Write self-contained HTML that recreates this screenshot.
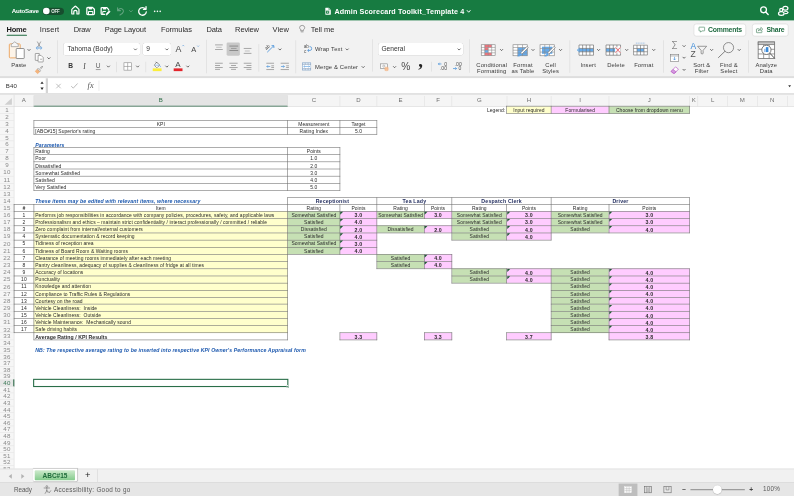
<!DOCTYPE html>
<html lang="en"><head><meta charset="utf-8"><title>Admin Scorecard Toolkit_Template 4</title>
<style>
html,body{margin:0;padding:0;background:#fff;}
body{width:794px;height:496px;overflow:hidden;position:relative;font-family:"Liberation Sans",sans-serif;}
#root{position:absolute;left:0;top:0;width:1440px;height:900px;transform-origin:0 0;transform:scale(0.551389);overflow:hidden;background:#fff;}
.a{position:absolute;box-sizing:border-box;}
.t{position:absolute;transform:translateY(-50%);white-space:nowrap;line-height:1;}
.c{position:absolute;transform:translate(-50%,-50%);white-space:nowrap;line-height:1;}
.cell{position:absolute;box-sizing:border-box;white-space:nowrap;overflow:hidden;font-size:9px;line-height:1;display:flex;align-items:center;color:#2b2b2b;letter-spacing:0.1px;}
svg{display:block}
#wrap{position:absolute;left:0;top:0;width:794px;height:496px;overflow:hidden;will-change:transform;}
</style></head><body><div id="wrap"><div id="root">
<div class="a" style="left:0.0px;top:0.0px;width:1440.0px;height:37.63px;background:#177b41;"></div>
<div class="a" style="left:0.0px;top:36.63px;width:1440.0px;height:101.2px;background:#f2f2f2;"></div>
<div class="a" style="left:0.0px;top:137.83px;width:1440.0px;height:4.53px;background:#dedede;"></div>
<div class="a" style="left:0.0px;top:142.37px;width:1440.0px;height:26.3px;background:#fff;"></div>
<div class="a" style="left:83.43px;top:142.37px;width:3.26px;height:26.3px;background:#d4d4d4;"></div>
<div class="a" style="left:0.0px;top:168.66px;width:1440.0px;height:3.63px;background:#dcdcdc;"></div>
<span class="t" id="t1" style="left:21.4px;top:20.68px;font-size:11.2px;letter-spacing:-0.351px;color:#fff;font-weight:bold;">AutoSave</span>
<div class="a" style="left:76.9px;top:13.78px;width:39.54px;height:13.24px;background:#174d2e;border-radius:99px;"></div>
<div class="a" style="left:77.8px;top:14.33px;width:12.33px;height:12.15px;background:#fff;border-radius:50%;"></div>
<span class="t" id="t2" style="left:92.86px;top:20.68px;font-size:8px;letter-spacing:-0.385px;color:#e8f0ea;font-weight:bold;">OFF</span>
<svg class="a" style="left:128.4px;top:9.43px;width:17.41px;height:18.14px;overflow:visible;" viewBox="0 0 18 19"><path d="M2.2 9.2 Q2.2 8.2 3 7.5 L8 2.8 Q9 2 10 2.8 L15 7.5 Q15.8 8.2 15.8 9.2 V16 Q15.8 17.2 14.6 17.2 H12 V12.4 Q12 10.4 9 10.4 Q6 10.4 6 12.4 V17.2 H3.4 Q2.2 17.2 2.2 16 Z" fill="none" stroke="#fff" stroke-width="2.3" stroke-linejoin="round"/></svg>
<svg class="a" style="left:155.97px;top:11.61px;width:16.69px;height:15.96px;overflow:visible;" viewBox="0 0 18 17"><path d="M1.6 3.6 Q1.6 1.6 3.6 1.6 H12.6 L16.4 5.2 V13.4 Q16.4 15.4 14.4 15.4 H3.6 Q1.6 15.4 1.6 13.4 Z" fill="none" stroke="#fff" stroke-width="2.5" stroke-linejoin="round"/><rect x="5.4" y="1.8" width="6.2" height="3.6" fill="#fff"/><rect x="4.8" y="9.4" width="8.4" height="5.8" rx="0.8" fill="none" stroke="#fff" stroke-width="2"/></svg>
<svg class="a" style="left:182.45px;top:11.61px;width:18.14px;height:16.32px;overflow:visible;" viewBox="0 0 20 17.4"><path d="M16.4 7.6 V5.2 L12.6 1.6 H3.6 Q1.6 1.6 1.6 3.6 V13.4 Q1.6 15.4 3.6 15.4 H9.4" fill="none" stroke="#fff" stroke-width="2.5" stroke-linejoin="round"/><rect x="5.4" y="1.8" width="6.2" height="3.6" fill="#fff"/><path d="M4.8 15 V9.4 H11" fill="none" stroke="#fff" stroke-width="2"/><path d="M11.4 16.8 L12 13.6 L17 8.6 Q18 7.8 19 8.8 Q19.8 9.8 19 10.6 L14.2 15.6 Z" fill="#fff" stroke="#fff" stroke-width="1.2" stroke-linejoin="round"/></svg>
<svg class="a" style="left:210.74px;top:11.61px;width:15.6px;height:16.32px;overflow:visible;" viewBox="0 0 18 18.8"><path d="M2.6 2.4 V8.4 H8.6 M3 8 Q6.6 2.8 11.4 4.4 Q15.6 6.2 14.8 10.6 Q13.8 14.4 7.6 17.4" fill="none" stroke="#63a480" stroke-width="2.2" stroke-linecap="round" stroke-linejoin="round"/></svg>
<svg class="a" style="left:233.59px;top:17.77px;width:6.89px;height:5.08px;overflow:visible;" viewBox="0 0 8 6"><path d="M1 1.2 L4 4.4 L7 1.2" fill="none" stroke="#63a480" stroke-width="1.8" stroke-linecap="round"/></svg>
<svg class="a" style="left:248.83px;top:10.52px;width:18.86px;height:18.14px;overflow:visible;" viewBox="0 0 20 19.2"><path d="M15.8 5.6 A7.4 7.4 0 1 0 17.4 11" fill="none" stroke="#fff" stroke-width="2.5" stroke-linecap="round"/><path d="M16.8 1.2 V6.2 H11.8" fill="none" stroke="#fff" stroke-width="2.5" stroke-linecap="round" stroke-linejoin="round"/></svg>
<div class="a" style="left:278.57px;top:19.04px;width:3.26px;height:3.26px;background:#fff;border-radius:50%;"></div>
<div class="a" style="left:283.83px;top:19.04px;width:3.26px;height:3.26px;background:#fff;border-radius:50%;"></div>
<div class="a" style="left:289.09px;top:19.04px;width:3.26px;height:3.26px;background:#fff;border-radius:50%;"></div>
<svg class="a" style="left:588.7px;top:13.06px;width:11.97px;height:14.51px;overflow:visible;" viewBox="0 0 13 16"><path d="M1 1.8 Q1 1 1.8 1 H8 L12 5 V14.2 Q12 15 11.2 15 H1.8 Q1 15 1 14.2 Z" fill="#fff"/><path d="M8 1 V5 H12" fill="none" stroke="#177b41" stroke-width="1"/><rect x="2.2" y="7" width="6.6" height="6" fill="#177b41"/><path d="M3.6 8.2 L7.4 11.8 M7.4 8.2 L3.6 11.8" stroke="#fff" stroke-width="1.1"/></svg>
<span class="t" id="t3" style="left:606.47px;top:20.68px;font-size:13px;letter-spacing:0.252px;color:#fff;font-weight:bold;">Admin Scorecard Toolkit_Template 4</span>
<svg class="a" style="left:845.86px;top:17.77px;width:7.98px;height:5.44px;overflow:visible;" viewBox="0 0 8 6"><path d="M1 1.2 L4 4.6 L7 1.2" fill="none" stroke="#fff" stroke-width="2" stroke-linecap="round"/></svg>
<svg class="a" style="left:1374.71px;top:7.25px;width:21.76px;height:23.58px;overflow:visible;" viewBox="758 4 12 13"><circle cx="763.4" cy="10" r="2.9" fill="none" stroke="#fff" stroke-width="1.3"/><path d="M765.6 12.2 L768 14.6" stroke="#fff" stroke-width="1.4" stroke-linecap="round"/></svg>
<svg class="a" style="left:1409.17px;top:7.25px;width:25.39px;height:25.39px;overflow:visible;" viewBox="777 4 14 14"><ellipse cx="785.5" cy="8.3" rx="2.5" ry="1.9" fill="none" stroke="#fff" stroke-width="1.25"/><circle cx="781.3" cy="10.1" r="1.5" fill="none" stroke="#fff" stroke-width="1.2"/><ellipse cx="781.4" cy="13.7" rx="2.8" ry="1.9" fill="none" stroke="#fff" stroke-width="1.25"/><path d="M784.6 11.4 Q787.6 11 788.2 12.6 Q787.6 13.8 785.2 13.8" fill="none" stroke="#fff" stroke-width="1.1" stroke-linecap="round"/></svg>
<span class="t" id="t4" style="left:11.79px;top:52.59px;font-size:13.6px;letter-spacing:-0.384px;color:#1c1c1c;font-weight:bold;">Home</span>
<div class="a" style="left:11.61px;top:62.57px;width:37.0px;height:2.72px;background:#1e6b3f;border-radius:2px;"></div>
<span class="t" id="t5" style="left:72.18px;top:52.59px;font-size:13.6px;letter-spacing:0.236px;color:#2c2c2c;">Insert</span>
<span class="t" id="t6" style="left:133.66px;top:52.59px;font-size:13.6px;letter-spacing:-0.301px;color:#2c2c2c;">Draw</span>
<span class="t" id="t7" style="left:190.07px;top:52.59px;font-size:13.6px;letter-spacing:-0.162px;color:#2c2c2c;">Page Layout</span>
<span class="t" id="t8" style="left:291.81px;top:52.59px;font-size:13.6px;letter-spacing:-0.037px;color:#2c2c2c;">Formulas</span>
<span class="t" id="t9" style="left:374.69px;top:52.59px;font-size:13.6px;letter-spacing:-0.323px;color:#2c2c2c;">Data</span>
<span class="t" id="t10" style="left:426.38px;top:52.59px;font-size:13.6px;letter-spacing:-0.246px;color:#2c2c2c;">Review</span>
<span class="t" id="t11" style="left:494.21px;top:52.59px;font-size:13.6px;letter-spacing:0.174px;color:#2c2c2c;">View</span>
<span class="t" id="t12" style="left:563.67px;top:52.59px;font-size:13.6px;letter-spacing:-0.044px;color:#2c2c2c;">Tell me</span>
<svg class="a" style="left:542.27px;top:44.98px;width:11.97px;height:14.51px;overflow:visible;" viewBox="0 0 12 15"><path d="M3.6 9.4 Q1.2 7.6 1.2 5.2 Q1.4 1.2 6 1 Q10.6 1.2 10.8 5.2 Q10.8 7.6 8.4 9.4 V11 H3.6 Z M4.2 13.2 H7.8" fill="none" stroke="#666" stroke-width="1.1" stroke-linejoin="round" stroke-linecap="round"/></svg>
<div class="a" style="left:1258.28px;top:43.35px;width:94.49px;height:22.31px;background:#fff;border-radius:4.5px;border:1px solid #d4d4d4;"></div>
<svg class="a" style="left:1266.62px;top:48.24px;width:11.61px;height:11.61px;overflow:visible;" viewBox="0 0 13 13"><path d="M1.6 1.4 H11.4 Q12.2 1.4 12.2 2.2 V8.2 Q12.2 9 11.4 9 H6.6 L4 11.6 V9 H1.6 Q0.8 9 0.8 8.2 V2.2 Q0.8 1.4 1.6 1.4 Z" fill="none" stroke="#3c7d57" stroke-width="1.2" stroke-linejoin="round"/></svg>
<span class="t" id="t13" style="left:1283.85px;top:55.13px;font-size:12.5px;letter-spacing:-0.341px;color:#1f6a40;font-weight:bold;">Comments</span>
<div class="a" style="left:1364.19px;top:43.35px;width:65.65px;height:22.31px;background:#fff;border-radius:4.5px;border:1px solid #d4d4d4;"></div>
<svg class="a" style="left:1371.45px;top:47.88px;width:13.06px;height:12.33px;overflow:visible;" viewBox="0 0 14 13"><path d="M5 4.4 H2.2 Q1 4.4 1 5.6 V11 Q1 12 2.2 12 H10.6 Q11.6 12 11.6 11 V9" fill="none" stroke="#3c7d57" stroke-width="1.2" stroke-linecap="round"/><path d="M4.6 9 Q5 4.6 9.6 4.2 V1.6 L13.4 5 L9.6 8.4 V6 Q6.4 6 4.6 9 Z" fill="none" stroke="#3c7d57" stroke-width="1.1" stroke-linejoin="round"/></svg>
<span class="t" id="t14" style="left:1389.94px;top:55.13px;font-size:12.5px;letter-spacing:-0.390px;color:#1f6a40;font-weight:bold;">Share</span>
<svg class="a" style="left:16.32px;top:75.45px;width:28.65px;height:31.92px;overflow:visible;" viewBox="0 0 28.7 31.9"><rect x="0.9" y="4.6" width="19.8" height="25.4" rx="1.6" fill="#fdf4e8" stroke="#eca55f" stroke-width="1.7"/><path d="M4.4 9.6 V5.6 L10.8 0.8 L17.2 5.6 V9.6 Z" fill="#f7f7f7" stroke="#8d8d8d" stroke-width="1.2" stroke-linejoin="round"/><rect x="13.4" y="13" width="14.6" height="18.2" rx="1.2" fill="#fff" stroke="#747474" stroke-width="1.4"/></svg>
<svg class="a" style="left:49.78px;top:89.32px;width:5.26px;height:3.45px;overflow:visible;" viewBox="0 0 8 4.4"><path d="M0.8 0.6 L4 3.8 L7.2 0.6" fill="none" stroke="#2c2c2c" stroke-width="1.9" stroke-linecap="round" stroke-linejoin="round"/></svg>
<span class="t" id="t15" style="left:20.49px;top:117.34px;font-size:10.6px;letter-spacing:-0.018px;color:#3a3a3a;">Paste</span>
<svg class="a" style="left:65.29px;top:75.45px;width:11.61px;height:15.23px;overflow:visible;" viewBox="0 0 12 16"><path d="M3 1 L8.2 10.4 M9 1 L3.8 10.4" stroke="#666" stroke-width="1.1" stroke-linecap="round"/><circle cx="2.8" cy="12.6" r="2" fill="none" stroke="#3a8ad8" stroke-width="1.2"/><circle cx="9.2" cy="12.6" r="2" fill="none" stroke="#3a8ad8" stroke-width="1.2"/></svg>
<svg class="a" style="left:62.75px;top:96.12px;width:16.32px;height:17.41px;overflow:visible;" viewBox="0 0 17 18"><path d="M6.4 14 H1.6 Q1 14 1 13.4 V1.6 Q1 1 1.6 1 H8.6 V4" fill="#fafafa" stroke="#6c6c6c" stroke-width="1.1"/><path d="M6.4 4.6 H12 L16 8.6 V16.4 Q16 17 15.4 17 H7 Q6.4 17 6.4 16.4 Z" fill="#fff" stroke="#6c6c6c" stroke-width="1.1"/><path d="M10.4 12 h3 M11.9 10.5 v3" stroke="#8a8a8a" stroke-width="0.9"/></svg>
<svg class="a" style="left:85.51px;top:103.83px;width:5.26px;height:3.45px;overflow:visible;" viewBox="0 0 8 4.4"><path d="M0.8 0.6 L4 3.8 L7.2 0.6" fill="none" stroke="#2c2c2c" stroke-width="1.9" stroke-linecap="round" stroke-linejoin="round"/></svg>
<svg class="a" style="left:63.48px;top:118.61px;width:15.6px;height:15.6px;overflow:visible;" viewBox="0 0 16 16"><path d="M9.6 5.2 L13.8 1 L15 2.2 L10.8 6.4" fill="none" stroke="#666" stroke-width="1.1"/><path d="M6.2 5.2 L10.8 9.8 L9.4 11.2 L4.8 6.6 Z" fill="#fff" stroke="#666" stroke-width="1"/><path d="M4.4 7 L9 11.6 L5.4 15.2 Q3 13.4 0.8 10.6 Z" fill="#f5b47c" stroke="#ec9c58" stroke-width="0.8"/></svg>
<div class="a" style="left:104.14px;top:73.27px;width:1.02px;height:59.49px;background:#d8d8d8;"></div>
<div class="a" style="left:115.35px;top:77.8px;width:139.1px;height:22.31px;background:#fff;border-radius:3.5px;box-shadow:0 0 0.8px rgba(0,0,0,.35);"></div>
<span class="t" id="t16" style="left:122.42px;top:88.5px;font-size:12px;letter-spacing:0.065px;color:#333;">Tahoma (Body)</span>
<svg class="a" style="left:243.29px;top:87.51px;width:5.26px;height:3.45px;overflow:visible;" viewBox="0 0 8 4.4"><path d="M0.8 0.6 L4 3.8 L7.2 0.6" fill="none" stroke="#2c2c2c" stroke-width="1.9" stroke-linecap="round" stroke-linejoin="round"/></svg>
<div class="a" style="left:258.62px;top:77.8px;width:51.87px;height:22.31px;background:#fff;border-radius:3.5px;box-shadow:0 0 0.8px rgba(0,0,0,.35);"></div>
<span class="t" id="t17" style="left:265.15px;top:88.5px;font-size:12px;letter-spacing:0.000px;color:#333;">9</span>
<svg class="a" style="left:299.88px;top:87.51px;width:5.26px;height:3.45px;overflow:visible;" viewBox="0 0 8 4.4"><path d="M0.8 0.6 L4 3.8 L7.2 0.6" fill="none" stroke="#2c2c2c" stroke-width="1.9" stroke-linecap="round" stroke-linejoin="round"/></svg>
<span class="t" id="t18" style="left:318.11px;top:88.5px;font-size:16px;letter-spacing:0.000px;color:#444;">A</span>
<svg class="a" style="left:330.08px;top:80.89px;width:4.72px;height:3.26px;overflow:visible;" viewBox="0 0 6 4"><path d="M0.8 3.4 L3 1 L5.2 3.4" fill="none" stroke="#3a8ad8" stroke-width="1.1"/></svg>
<span class="t" id="t19" style="left:346.76px;top:89.59px;font-size:13.5px;letter-spacing:0.000px;color:#444;">A</span>
<svg class="a" style="left:356.55px;top:81.61px;width:4.72px;height:3.26px;overflow:visible;" viewBox="0 0 6 4"><path d="M0.8 0.8 L3 3.2 L5.2 0.8" fill="none" stroke="#3a8ad8" stroke-width="1.1"/></svg>
<span class="t" id="t20" style="left:123.69px;top:120.06px;font-size:12px;letter-spacing:0.000px;color:#333;font-weight:bold;">B</span>
<span class="t" id="t21" style="left:150.89px;top:120.06px;font-size:12px;letter-spacing:0.000px;color:#444;font-style:italic;font-family:'Liberation Serif',serif;font-size:13px;">I</span>
<span class="t" id="t22" style="left:173.74px;top:119.7px;font-size:12px;letter-spacing:0.000px;color:#5e5e5e;text-decoration:underline;text-decoration-thickness:0.8px;text-underline-offset:1.5px;">U</span>
<svg class="a" style="left:194.33px;top:119.43px;width:5.26px;height:3.45px;overflow:visible;" viewBox="0 0 8 4.4"><path d="M0.8 0.6 L4 3.8 L7.2 0.6" fill="none" stroke="#2c2c2c" stroke-width="1.9" stroke-linecap="round" stroke-linejoin="round"/></svg>
<div class="a" style="left:210.6px;top:111.72px;width:1.02px;height:18.86px;background:#d8d8d8;"></div>
<svg class="a" style="left:223.62px;top:112.81px;width:15.05px;height:15.05px;overflow:visible;" viewBox="0 0 15 15"><rect x="0.8" y="0.8" width="13.4" height="13.4" fill="#fff" stroke="#8d8d8d" stroke-width="1.1"/><path d="M7.5 0.8 V14.2 M0.8 7.5 H14.2" stroke="#8d8d8d" stroke-width="1.1"/></svg>
<svg class="a" style="left:247.28px;top:119.43px;width:5.26px;height:3.45px;overflow:visible;" viewBox="0 0 8 4.4"><path d="M0.8 0.6 L4 3.8 L7.2 0.6" fill="none" stroke="#2c2c2c" stroke-width="1.9" stroke-linecap="round" stroke-linejoin="round"/></svg>
<div class="a" style="left:264.28px;top:111.72px;width:1.02px;height:18.86px;background:#d8d8d8;"></div>
<svg class="a" style="left:278.57px;top:111.36px;width:13.42px;height:12.33px;overflow:visible;" viewBox="0 0 14 13"><path d="M5.4 1.6 L11.2 7.4 L6.6 12 Q5.8 12.6 5 12 L1.4 8.4 Q0.8 7.6 1.4 6.8 Z" fill="#fff" stroke="#555" stroke-width="1.1" stroke-linejoin="round"/><path d="M3.4 1 L6.6 4.2" stroke="#555" stroke-width="1.1"/><path d="M12.4 8.6 Q13.8 10.8 12.4 11.6 Q11 10.8 12.4 8.6 Z" fill="#3a8ad8"/><path d="M2.2 7.6 H10.8" stroke="#3a8ad8" stroke-width="1"/></svg>
<div class="a" style="left:277.12px;top:124.41px;width:16.32px;height:4.35px;background:#fbee3a;"></div>
<svg class="a" style="left:300.24px;top:119.43px;width:5.26px;height:3.45px;overflow:visible;" viewBox="0 0 8 4.4"><path d="M0.8 0.6 L4 3.8 L7.2 0.6" fill="none" stroke="#2c2c2c" stroke-width="1.9" stroke-linecap="round" stroke-linejoin="round"/></svg>
<span class="t" id="t23" style="left:317.92px;top:117.16px;font-size:14.5px;letter-spacing:0.000px;color:#444;">A</span>
<div class="a" style="left:314.84px;top:124.41px;width:16.32px;height:4.35px;background:#e3242b;"></div>
<svg class="a" style="left:338.33px;top:119.43px;width:5.26px;height:3.45px;overflow:visible;" viewBox="0 0 8 4.4"><path d="M0.8 0.6 L4 3.8 L7.2 0.6" fill="none" stroke="#2c2c2c" stroke-width="1.9" stroke-linecap="round" stroke-linejoin="round"/></svg>
<div class="a" style="left:373.82px;top:71.82px;width:1.02px;height:61.3px;background:#d8d8d8;"></div>
<div class="a" style="left:389.74px;top:81.09px;width:14.69px;height:1.05px;background:#6c6c6c;"></div>
<div class="a" style="left:392.46px;top:85.08px;width:9.43px;height:1.05px;background:#9a9a9a;"></div>
<div class="a" style="left:389.74px;top:89.07px;width:14.69px;height:1.05px;background:#6c6c6c;"></div>
<div class="a" style="left:411.32px;top:76.53px;width:23.76px;height:24.12px;background:#c8c8c8;border-radius:2.5px;"></div>
<div class="a" style="left:415.5px;top:83.08px;width:16.14px;height:1.05px;background:#5c5c5c;"></div>
<div class="a" style="left:418.58px;top:87.07px;width:9.97px;height:1.05px;background:#7a7a7a;"></div>
<div class="a" style="left:415.5px;top:91.06px;width:16.14px;height:1.05px;background:#5c5c5c;"></div>
<div class="a" style="left:441.61px;top:87.07px;width:14.51px;height:1.05px;background:#6c6c6c;"></div>
<div class="a" style="left:444.33px;top:91.61px;width:9.07px;height:1.05px;background:#9a9a9a;"></div>
<div class="a" style="left:441.61px;top:96.14px;width:14.51px;height:1.05px;background:#6c6c6c;"></div>
<div class="a" style="left:469.22px;top:79.8px;width:1.02px;height:50.06px;background:#d8d8d8;"></div>
<svg class="a" style="left:481.33px;top:79.8px;width:18.14px;height:16.69px;overflow:visible;" viewBox="0 0 18 16.6"><path d="M3.6 14.6 L15.2 3.2" stroke="#3a8ad8" stroke-width="1.4"/><path d="M11.4 2.8 L15.6 2.8 L15.6 7" fill="none" stroke="#3a8ad8" stroke-width="1.4"/><text x="0.2" y="8.4" font-family="Liberation Sans, sans-serif" font-size="8.5" fill="#4a4a4a" transform="rotate(-40 4 7)">ab</text></svg>
<svg class="a" style="left:505.18px;top:87.87px;width:5.26px;height:3.45px;overflow:visible;" viewBox="0 0 8 4.4"><path d="M0.8 0.6 L4 3.8 L7.2 0.6" fill="none" stroke="#2c2c2c" stroke-width="1.9" stroke-linecap="round" stroke-linejoin="round"/></svg>
<div class="a" style="left:389.74px;top:114.28px;width:14.69px;height:1.05px;background:#6c6c6c;"></div>
<div class="a" style="left:415.86px;top:114.28px;width:14.69px;height:1.05px;background:#6c6c6c;"></div>
<div class="a" style="left:441.61px;top:114.28px;width:14.69px;height:1.05px;background:#6c6c6c;"></div>
<div class="a" style="left:389.74px;top:117.9px;width:9.61px;height:1.05px;background:#6c6c6c;"></div>
<div class="a" style="left:418.76px;top:117.9px;width:8.89px;height:1.05px;background:#6c6c6c;"></div>
<div class="a" style="left:446.51px;top:117.9px;width:9.79px;height:1.05px;background:#6c6c6c;"></div>
<div class="a" style="left:389.74px;top:121.71px;width:14.69px;height:1.05px;background:#6c6c6c;"></div>
<div class="a" style="left:415.86px;top:121.71px;width:14.69px;height:1.05px;background:#6c6c6c;"></div>
<div class="a" style="left:441.61px;top:121.71px;width:14.69px;height:1.05px;background:#6c6c6c;"></div>
<div class="a" style="left:389.74px;top:125.34px;width:9.61px;height:1.05px;background:#6c6c6c;"></div>
<div class="a" style="left:418.76px;top:125.34px;width:8.89px;height:1.05px;background:#6c6c6c;"></div>
<div class="a" style="left:446.51px;top:125.34px;width:9.79px;height:1.05px;background:#6c6c6c;"></div>
<div class="a" style="left:482.78px;top:114.28px;width:14.51px;height:1.05px;background:#6c6c6c;"></div>
<div class="a" style="left:482.78px;top:125.88px;width:14.51px;height:1.05px;background:#6c6c6c;"></div>
<div class="a" style="left:492.21px;top:118.63px;width:5.08px;height:1.05px;background:#6c6c6c;"></div>
<div class="a" style="left:492.21px;top:121.71px;width:5.08px;height:1.05px;background:#6c6c6c;"></div>
<div class="a" style="left:509.44px;top:114.28px;width:14.51px;height:1.05px;background:#6c6c6c;"></div>
<div class="a" style="left:509.44px;top:125.88px;width:14.51px;height:1.05px;background:#6c6c6c;"></div>
<div class="a" style="left:518.87px;top:118.63px;width:5.08px;height:1.05px;background:#6c6c6c;"></div>
<div class="a" style="left:518.87px;top:121.71px;width:5.08px;height:1.05px;background:#6c6c6c;"></div>
<svg class="a" style="left:482.78px;top:117.16px;width:7.62px;height:7.25px;overflow:visible;" viewBox="0 0 8 7"><path d="M7.4 3.5 H1 M3.2 1.2 L1 3.5 L3.2 5.8" fill="none" stroke="#3a8ad8" stroke-width="1.2"/></svg>
<svg class="a" style="left:509.44px;top:117.16px;width:7.62px;height:7.25px;overflow:visible;" viewBox="0 0 8 7"><path d="M0.6 3.5 H7 M4.8 1.2 L7 3.5 L4.8 5.8" fill="none" stroke="#3a8ad8" stroke-width="1.2"/></svg>
<div class="a" style="left:535.77px;top:72.54px;width:1.02px;height:60.21px;background:#d8d8d8;"></div>
<svg class="a" style="left:550.97px;top:81.07px;width:14.87px;height:15.6px;overflow:visible;" viewBox="0 0 15 15.7"><text x="-0.3" y="6.8" font-family="Liberation Sans, sans-serif" font-size="8.6" fill="#555">ab</text><path d="M10.4 3.6 H11.6 Q14.4 3.8 14.4 7.2 Q14.4 10.6 11.4 10.6 H7.4" fill="none" stroke="#3a8ad8" stroke-width="1.3"/><path d="M9.6 8.2 L7 10.6 L9.6 13" fill="none" stroke="#3a8ad8" stroke-width="1.3"/><text x="0.2" y="14.6" font-family="Liberation Sans, sans-serif" font-size="8.6" fill="#555">c</text></svg>
<span class="t" id="t24" style="left:571.28px;top:89.41px;font-size:10.6px;letter-spacing:0.275px;color:#3a3a3a;">Wrap Text</span>
<svg class="a" style="left:627.23px;top:88.23px;width:5.26px;height:3.45px;overflow:visible;" viewBox="0 0 8 4.4"><path d="M0.8 0.6 L4 3.8 L7.2 0.6" fill="none" stroke="#2c2c2c" stroke-width="1.9" stroke-linecap="round" stroke-linejoin="round"/></svg>
<svg class="a" style="left:548.43px;top:112.81px;width:16.32px;height:15.05px;overflow:visible;" viewBox="0 0 17 15"><rect x="0.7" y="0.7" width="15.6" height="13.6" fill="#e3effb" stroke="#6f93bd" stroke-width="1"/><path d="M0.7 4 H16.3 M0.7 11 H16.3 M5.8 0.7 V4 M11.2 0.7 V4 M5.8 11 V14.3 M11.2 11 V14.3" stroke="#7d8ea6" stroke-width="0.9"/><rect x="1.4" y="4.6" width="14.2" height="5.8" fill="#fff"/><path d="M3 7.5 H14 M4.8 5.8 L3 7.5 L4.8 9.2 M12.2 5.8 L14 7.5 L12.2 9.2" fill="none" stroke="#3a8ad8" stroke-width="1"/></svg>
<span class="t" id="t25" style="left:571.28px;top:121.51px;font-size:10.6px;letter-spacing:0.246px;color:#3a3a3a;">Merge &amp; Center</span>
<svg class="a" style="left:655.71px;top:120.15px;width:5.26px;height:3.45px;overflow:visible;" viewBox="0 0 8 4.4"><path d="M0.8 0.6 L4 3.8 L7.2 0.6" fill="none" stroke="#2c2c2c" stroke-width="1.9" stroke-linecap="round" stroke-linejoin="round"/></svg>
<div class="a" style="left:674.88px;top:71.46px;width:1.02px;height:58.76px;background:#d8d8d8;"></div>
<div class="a" style="left:685.9px;top:77.8px;width:154.16px;height:22.31px;background:#fff;border-radius:3.5px;box-shadow:0 0 0.8px rgba(0,0,0,.35);"></div>
<span class="t" id="t26" style="left:691.71px;top:88.87px;font-size:12px;letter-spacing:0.016px;color:#333;">General</span>
<svg class="a" style="left:830.18px;top:87.51px;width:5.26px;height:3.45px;overflow:visible;" viewBox="0 0 8 4.4"><path d="M0.8 0.6 L4 3.8 L7.2 0.6" fill="none" stroke="#2c2c2c" stroke-width="1.9" stroke-linecap="round" stroke-linejoin="round"/></svg>
<svg class="a" style="left:689.17px;top:114.62px;width:16.69px;height:13.78px;overflow:visible;" viewBox="0 0 17 14"><rect x="0.8" y="0.8" width="13" height="8.4" fill="#fafafa" stroke="#7a7a7a" stroke-width="1"/><circle cx="7.2" cy="5" r="2" fill="none" stroke="#8a8a8a" stroke-width="0.9"/><ellipse cx="12.2" cy="8.4" rx="3.6" ry="1.5" fill="#f9cfae" stroke="#efa066" stroke-width="0.7"/><ellipse cx="12.2" cy="10.2" rx="3.6" ry="1.5" fill="#f9cfae" stroke="#efa066" stroke-width="0.7"/><ellipse cx="12.2" cy="12" rx="3.6" ry="1.5" fill="#f9cfae" stroke="#efa066" stroke-width="0.7"/></svg>
<svg class="a" style="left:713.02px;top:119.79px;width:5.26px;height:3.45px;overflow:visible;" viewBox="0 0 8 4.4"><path d="M0.8 0.6 L4 3.8 L7.2 0.6" fill="none" stroke="#2c2c2c" stroke-width="1.9" stroke-linecap="round" stroke-linejoin="round"/></svg>
<span class="t" id="t27" style="left:727.62px;top:121.33px;font-size:18.5px;letter-spacing:0.000px;color:#4a4a4a;letter-spacing:0;">%</span>
<span class="t" id="t28" style="left:758.45px;top:109.9px;font-size:34px;letter-spacing:0.000px;color:#222;font-weight:bold;font-family:'Liberation Serif',serif;">,</span>
<div class="a" style="left:782.06px;top:112.44px;width:1.02px;height:17.41px;background:#d8d8d8;"></div>
<svg class="a" style="left:793.63px;top:112.08px;width:18.14px;height:16.32px;overflow:visible;" viewBox="0 0 18.14 16.32"><path d="M6.6 4 H1 M3.2 1.8 L1 4 L3.2 6.2" fill="none" stroke="#3a8ad8" stroke-width="1.25"/><text x="11.6" y="7.4" font-family="Liberation Sans, sans-serif" font-size="9.2" fill="#505050">0</text><text x="3.4" y="15.2" font-family="Liberation Sans, sans-serif" font-size="9.2" fill="#505050">.</text><text x="6.1" y="15.2" font-family="Liberation Sans, sans-serif" font-size="9.2" fill="#505050">0</text><text x="11.6" y="15.2" font-family="Liberation Sans, sans-serif" font-size="9.2" fill="#505050">0</text></svg>
<svg class="a" style="left:820.11px;top:112.08px;width:18.14px;height:16.32px;overflow:visible;" viewBox="0 0 18.14 16.32"><text x="4.4" y="7.4" font-family="Liberation Sans, sans-serif" font-size="9.2" fill="#505050">.</text><text x="7.1" y="7.4" font-family="Liberation Sans, sans-serif" font-size="9.2" fill="#505050">0</text><text x="12.4" y="7.4" font-family="Liberation Sans, sans-serif" font-size="9.2" fill="#505050">0</text><path d="M1.6 12.3 H8 M5.8 10.1 L8 12.3 L5.8 14.5" fill="none" stroke="#3a8ad8" stroke-width="1.25"/><text x="11.4" y="15.2" font-family="Liberation Sans, sans-serif" font-size="9.2" fill="#505050">0</text></svg>
<div class="a" style="left:851.34px;top:71.46px;width:1.02px;height:60.94px;background:#d8d8d8;"></div>
<svg class="a" style="left:871.07px;top:79.8px;width:28.84px;height:21.76px;overflow:visible;" viewBox="0 0 24 19"><rect x="1" y="1" width="22" height="17" fill="#fff"/><rect x="6.5" y="1" width="11" height="4.25" fill="#f2727b"/><rect x="6.5" y="5.25" width="5.5" height="4.25" fill="#f2727b"/><rect x="6.5" y="9.5" width="5.5" height="4.25" fill="#64aaeb"/><rect x="6.5" y="13.75" width="11" height="4.25" fill="#f2727b"/><path d="M6.50 1 V18" stroke="#8a8a8a" stroke-width="0.9"/><path d="M12.00 1 V18" stroke="#8a8a8a" stroke-width="0.9"/><path d="M17.50 1 V18" stroke="#8a8a8a" stroke-width="0.9"/><path d="M1 5.25 H23" stroke="#8a8a8a" stroke-width="0.9"/><path d="M1 9.50 H23" stroke="#8a8a8a" stroke-width="0.9"/><path d="M1 13.75 H23" stroke="#8a8a8a" stroke-width="0.9"/><rect x="1" y="1" width="22" height="17" fill="none" stroke="#848484" stroke-width="1"/></svg>
<svg class="a" style="left:906.89px;top:89.32px;width:5.26px;height:3.45px;overflow:visible;" viewBox="0 0 8 4.4"><path d="M0.8 0.6 L4 3.8 L7.2 0.6" fill="none" stroke="#2c2c2c" stroke-width="1.9" stroke-linecap="round" stroke-linejoin="round"/></svg>
<span class="c" style="left:891.75px;top:116.61px;font-size:10.6px;color:#3a3a3a;letter-spacing:0.25px;">Conditional</span>
<span class="c" style="left:891.75px;top:128.22px;font-size:10.6px;color:#3a3a3a;letter-spacing:0.25px;">Formatting</span>
<svg class="a" style="left:928.56px;top:79.62px;width:28.65px;height:22.31px;overflow:visible;" viewBox="0 0 24 19"><rect x="1" y="1" width="22" height="17" fill="#fff"/><rect x="8.3" y="5.25" width="14.7" height="12.75" fill="#64aaeb"/><path d="M8.33 1 V18" stroke="#8a8a8a" stroke-width="0.9"/><path d="M15.67 1 V18" stroke="#8a8a8a" stroke-width="0.9"/><path d="M1 5.25 H23" stroke="#8a8a8a" stroke-width="0.9"/><path d="M1 9.50 H23" stroke="#8a8a8a" stroke-width="0.9"/><path d="M1 13.75 H23" stroke="#8a8a8a" stroke-width="0.9"/><rect x="1" y="1" width="22" height="17" fill="none" stroke="#848484" stroke-width="1"/><path d="M22.6 3.6 L24.6 5.6 L14.6 15.6 L12.6 13.6 Z" fill="#fff" stroke="#6a6a6a" stroke-width="0.9"/><path d="M12.4 13.8 L14.4 15.8 Q12.4 19.6 8 18.6 Q10.6 17 12.4 13.8 Z" fill="#64aaeb" stroke="#4f95d8" stroke-width="0.6"/></svg>
<svg class="a" style="left:964.02px;top:89.32px;width:5.26px;height:3.45px;overflow:visible;" viewBox="0 0 8 4.4"><path d="M0.8 0.6 L4 3.8 L7.2 0.6" fill="none" stroke="#2c2c2c" stroke-width="1.9" stroke-linecap="round" stroke-linejoin="round"/></svg>
<span class="c" style="left:948.51px;top:116.61px;font-size:10.6px;color:#3a3a3a;letter-spacing:0.25px;">Format</span>
<span class="c" style="left:948.51px;top:128.22px;font-size:10.6px;color:#3a3a3a;letter-spacing:0.25px;">as Table</span>
<svg class="a" style="left:978.26px;top:79.62px;width:28.65px;height:22.31px;overflow:visible;" viewBox="0 0 24 19"><rect x="1" y="1" width="22" height="17" fill="#fff"/><rect x="4" y="4" width="16" height="11" fill="#64aaeb"/><path d="M8.33 1 V18" stroke="#8a8a8a" stroke-width="0.9"/><path d="M15.67 1 V18" stroke="#8a8a8a" stroke-width="0.9"/><path d="M1 6.67 H23" stroke="#8a8a8a" stroke-width="0.9"/><path d="M1 12.33 H23" stroke="#8a8a8a" stroke-width="0.9"/><rect x="1" y="1" width="22" height="17" fill="none" stroke="#848484" stroke-width="1"/><path d="M22.6 3.6 L24.6 5.6 L14.6 15.6 L12.6 13.6 Z" fill="#fff" stroke="#6a6a6a" stroke-width="0.9"/><path d="M12.4 13.8 L14.4 15.8 Q12.4 19.6 8 18.6 Q10.6 17 12.4 13.8 Z" fill="#64aaeb" stroke="#4f95d8" stroke-width="0.6"/></svg>
<svg class="a" style="left:1014.26px;top:89.32px;width:5.26px;height:3.45px;overflow:visible;" viewBox="0 0 8 4.4"><path d="M0.8 0.6 L4 3.8 L7.2 0.6" fill="none" stroke="#2c2c2c" stroke-width="1.9" stroke-linecap="round" stroke-linejoin="round"/></svg>
<span class="c" style="left:998.57px;top:116.61px;font-size:10.6px;color:#3a3a3a;letter-spacing:0.25px;">Cell</span>
<span class="c" style="left:998.57px;top:128.22px;font-size:10.6px;color:#3a3a3a;letter-spacing:0.25px;">Styles</span>
<div class="a" style="left:1032.88px;top:72.54px;width:1.02px;height:59.85px;background:#d8d8d8;"></div>
<svg class="a" style="left:1049.35px;top:79.8px;width:28.47px;height:21.76px;overflow:visible;" viewBox="0 0 26 19"><rect x="1" y="1" width="24" height="17" fill="#fff"/><rect x="1" y="7" width="24" height="5" fill="#64aaeb"/><path d="M1.00 1 V18" stroke="#707070" stroke-width="1.1"/><path d="M7.00 1 V18" stroke="#707070" stroke-width="1.1"/><path d="M13.00 1 V18" stroke="#707070" stroke-width="1.1"/><path d="M19.00 1 V18" stroke="#707070" stroke-width="1.1"/><path d="M25.00 1 V18" stroke="#707070" stroke-width="1.1"/><path d="M1 1.00 H25" stroke="#707070" stroke-width="1.1"/><path d="M1 6.67 H25" stroke="#707070" stroke-width="1.1"/><path d="M1 12.33 H25" stroke="#707070" stroke-width="1.1"/><path d="M1 18.00 H25" stroke="#707070" stroke-width="1.1"/><path d="M9 9.5 H-1.6 M2.4 5.8 L-1.8 9.5 L2.4 13.2" fill="none" stroke="#64aaeb" stroke-width="1.5"/></svg>
<svg class="a" style="left:1083.36px;top:89.32px;width:5.26px;height:3.45px;overflow:visible;" viewBox="0 0 8 4.4"><path d="M0.8 0.6 L4 3.8 L7.2 0.6" fill="none" stroke="#2c2c2c" stroke-width="1.9" stroke-linecap="round" stroke-linejoin="round"/></svg>
<span class="c" style="left:1066.76px;top:116.61px;font-size:10.6px;color:#3a3a3a;letter-spacing:0.25px;">Insert</span>
<svg class="a" style="left:1097.77px;top:79.8px;width:28.47px;height:21.76px;overflow:visible;" viewBox="0 0 26 19"><rect x="1" y="1" width="24" height="17" fill="#fff"/><rect x="1" y="7" width="15" height="5" fill="#64aaeb"/><path d="M1.00 1 V18" stroke="#707070" stroke-width="1.1"/><path d="M7.00 1 V18" stroke="#707070" stroke-width="1.1"/><path d="M13.00 1 V18" stroke="#707070" stroke-width="1.1"/><path d="M19.00 1 V18" stroke="#707070" stroke-width="1.1"/><path d="M25.00 1 V18" stroke="#707070" stroke-width="1.1"/><path d="M1 1.00 H25" stroke="#707070" stroke-width="1.1"/><path d="M1 6.67 H25" stroke="#707070" stroke-width="1.1"/><path d="M1 12.33 H25" stroke="#707070" stroke-width="1.1"/><path d="M1 18.00 H25" stroke="#707070" stroke-width="1.1"/><rect x="16.4" y="4.4" width="9" height="10.4" fill="#fff" opacity="0.75"/><path d="M16.8 5 L24.8 14 M24.8 5 L16.8 14" stroke="#e8505b" stroke-width="1.3"/></svg>
<svg class="a" style="left:1133.59px;top:89.32px;width:5.26px;height:3.45px;overflow:visible;" viewBox="0 0 8 4.4"><path d="M0.8 0.6 L4 3.8 L7.2 0.6" fill="none" stroke="#2c2c2c" stroke-width="1.9" stroke-linecap="round" stroke-linejoin="round"/></svg>
<span class="c" style="left:1117.18px;top:116.61px;font-size:10.6px;color:#3a3a3a;letter-spacing:0.25px;">Delete</span>
<svg class="a" style="left:1148.37px;top:79.8px;width:27.2px;height:21.76px;overflow:visible;" viewBox="0 0 26 19"><rect x="1" y="1" width="24" height="17" fill="#fff"/><rect x="7" y="7" width="12" height="5" fill="#64aaeb"/><path d="M1.00 1 V18" stroke="#707070" stroke-width="1.1"/><path d="M7.00 1 V18" stroke="#707070" stroke-width="1.1"/><path d="M13.00 1 V18" stroke="#707070" stroke-width="1.1"/><path d="M19.00 1 V18" stroke="#707070" stroke-width="1.1"/><path d="M25.00 1 V18" stroke="#707070" stroke-width="1.1"/><path d="M1 1.00 H25" stroke="#707070" stroke-width="1.1"/><path d="M1 6.67 H25" stroke="#707070" stroke-width="1.1"/><path d="M1 12.33 H25" stroke="#707070" stroke-width="1.1"/><path d="M1 18.00 H25" stroke="#707070" stroke-width="1.1"/><path d="M5 -2.6 H21" stroke="#9cbfe6" stroke-width="1.5" stroke-dasharray="2.2 0.8"/></svg>
<svg class="a" style="left:1183.1px;top:89.32px;width:5.26px;height:3.45px;overflow:visible;" viewBox="0 0 8 4.4"><path d="M0.8 0.6 L4 3.8 L7.2 0.6" fill="none" stroke="#2c2c2c" stroke-width="1.9" stroke-linecap="round" stroke-linejoin="round"/></svg>
<span class="c" style="left:1167.6px;top:116.61px;font-size:10.6px;color:#3a3a3a;letter-spacing:0.25px;">Format</span>
<div class="a" style="left:1203.0px;top:72.54px;width:1.02px;height:59.85px;background:#d8d8d8;"></div>
<span class="t" id="t29" style="left:1217.29px;top:83.43px;font-size:18.5px;letter-spacing:0.000px;color:#555;font-family:'DejaVu Sans',sans-serif;font-weight:200;">Σ</span>
<svg class="a" style="left:1238.24px;top:82.07px;width:5.26px;height:3.45px;overflow:visible;" viewBox="0 0 8 4.4"><path d="M0.8 0.6 L4 3.8 L7.2 0.6" fill="none" stroke="#2c2c2c" stroke-width="1.9" stroke-linecap="round" stroke-linejoin="round"/></svg>
<svg class="a" style="left:1215.11px;top:97.57px;width:16.69px;height:14.15px;overflow:visible;" viewBox="0 0 18 15"><rect x="0.8" y="0.8" width="16.4" height="13.4" fill="#fff" stroke="#777" stroke-width="1.1"/><path d="M0.8 3.6 H17.2" stroke="#777" stroke-width="1.1"/><path d="M9 5.4 V11.4 M6.6 9 L9 11.6 L11.4 9" fill="none" stroke="#3a8ad8" stroke-width="1.2"/></svg>
<svg class="a" style="left:1238.24px;top:103.28px;width:5.26px;height:3.45px;overflow:visible;" viewBox="0 0 8 4.4"><path d="M0.8 0.6 L4 3.8 L7.2 0.6" fill="none" stroke="#2c2c2c" stroke-width="1.9" stroke-linecap="round" stroke-linejoin="round"/></svg>
<svg class="a" style="left:1215.84px;top:119.7px;width:15.6px;height:13.78px;overflow:visible;" viewBox="0 0 16 14"><path d="M9.4 1.2 L14.8 5.4 L8 13 H5 L1.2 9.8 Z" fill="#fff" stroke="#b24fc0" stroke-width="1.2" stroke-linejoin="round"/><path d="M4.6 6 L10.4 10.4 L8 13 H5 L1.2 9.8 Z" fill="#d59be0" stroke="#b24fc0" stroke-width="1.1" stroke-linejoin="round"/></svg>
<svg class="a" style="left:1238.24px;top:125.23px;width:5.26px;height:3.45px;overflow:visible;" viewBox="0 0 8 4.4"><path d="M0.8 0.6 L4 3.8 L7.2 0.6" fill="none" stroke="#2c2c2c" stroke-width="1.9" stroke-linecap="round" stroke-linejoin="round"/></svg>
<svg class="a" style="left:1252.84px;top:77.26px;width:29.02px;height:27.93px;overflow:visible;" viewBox="0 0 30 29"><text x="-1" y="12" font-family="Liberation Sans, sans-serif" font-size="16" fill="#3a8ad8">A</text><text x="-0.6" y="27" font-family="Liberation Sans, sans-serif" font-size="16" fill="#555">Z</text><path d="M12.6 7.2 H29.6 L23 14.8 V20.8 Q21.1 22.6 19.2 20.8 V14.8 Z" fill="#f2f2f2" stroke="#666" stroke-width="1.2" stroke-linejoin="round"/></svg>
<svg class="a" style="left:1288.11px;top:89.32px;width:5.26px;height:3.45px;overflow:visible;" viewBox="0 0 8 4.4"><path d="M0.8 0.6 L4 3.8 L7.2 0.6" fill="none" stroke="#2c2c2c" stroke-width="1.9" stroke-linecap="round" stroke-linejoin="round"/></svg>
<span class="c" style="left:1272.6px;top:116.61px;font-size:10.6px;color:#3a3a3a;letter-spacing:0.25px;">Sort &amp;</span>
<span class="c" style="left:1272.6px;top:128.22px;font-size:10.6px;color:#3a3a3a;letter-spacing:0.25px;">Filter</span>
<svg class="a" style="left:1301.8px;top:76.17px;width:30.47px;height:29.38px;overflow:visible;" viewBox="0 0 31 30"><circle cx="19.6" cy="10.6" r="9.4" fill="none" stroke="#666" stroke-width="1.3"/><path d="M12.8 17.6 L1 29" stroke="#666" stroke-width="1.5" stroke-linecap="round"/></svg>
<svg class="a" style="left:1337.8px;top:89.32px;width:5.26px;height:3.45px;overflow:visible;" viewBox="0 0 8 4.4"><path d="M0.8 0.6 L4 3.8 L7.2 0.6" fill="none" stroke="#2c2c2c" stroke-width="1.9" stroke-linecap="round" stroke-linejoin="round"/></svg>
<span class="c" style="left:1321.93px;top:116.61px;font-size:10.6px;color:#3a3a3a;letter-spacing:0.25px;">Find &amp;</span>
<span class="c" style="left:1321.93px;top:128.22px;font-size:10.6px;color:#3a3a3a;letter-spacing:0.25px;">Select</span>
<div class="a" style="left:1356.97px;top:72.54px;width:1.02px;height:59.85px;background:#d8d8d8;"></div>
<svg class="a" style="left:1373.62px;top:74.9px;width:31.92px;height:32.1px;overflow:visible;" viewBox="0 0 32 32"><rect x="1" y="1" width="30" height="30" fill="#fff" stroke="#6a6a6a" stroke-width="1.4"/><rect x="1" y="1" width="30" height="5" fill="#c8c8c8" stroke="#6a6a6a" stroke-width="1.2"/><path d="M11 6 V31 M21 6 V31 M1 14.4 H31 M1 22.8 H31" stroke="#6a6a6a" stroke-width="1.2"/><circle cx="16" cy="15.4" r="8.4" fill="#fff" stroke="#555" stroke-width="1.4"/><rect x="11.6" y="13.4" width="3" height="6" fill="#9cc3ee"/><rect x="15" y="10.4" width="4.6" height="9" fill="#3a8ad8"/><path d="M22.4 21.6 L30.6 30.4" stroke="#555" stroke-width="1.8" stroke-linecap="round"/></svg>
<span class="c" style="left:1389.76px;top:116.98px;font-size:10.6px;color:#3a3a3a;letter-spacing:0.25px;">Analyze</span>
<span class="c" style="left:1389.76px;top:128.22px;font-size:10.6px;color:#3a3a3a;letter-spacing:0.25px;">Data</span>
<span class="t" id="t30" style="left:10.34px;top:156.15px;font-size:11px;letter-spacing:0.456px;color:#333;">B40</span>
<svg class="a" style="left:73.09px;top:147.45px;width:6.53px;height:5.8px;overflow:visible;" viewBox="0 0 8 6"><path d="M4 0.4 L7.6 5.6 H0.4 Z" fill="#2a2a2a"/></svg>
<svg class="a" style="left:73.09px;top:157.96px;width:6.53px;height:5.8px;overflow:visible;" viewBox="0 0 8 6"><path d="M4 5.6 L7.6 0.4 H0.4 Z" fill="#2a2a2a"/></svg>
<svg class="a" style="left:100.84px;top:150.89px;width:10.16px;height:10.16px;overflow:visible;" viewBox="0 0 10 10"><path d="M1 1 L9 9 M9 1 L1 9" stroke="#a8a8a8" stroke-width="1.3"/></svg>
<svg class="a" style="left:128.04px;top:150.17px;width:13.78px;height:11.24px;overflow:visible;" viewBox="0 0 13 10"><path d="M1 5.6 L4.6 9 L12 1" fill="none" stroke="#a8a8a8" stroke-width="1.3"/></svg>
<span class="t" id="t31" style="left:158.87px;top:155.24px;font-size:15px;letter-spacing:0.000px;color:#555;font-style:italic;font-family:'Liberation Serif',serif;">fx</span>
<div class="a" style="left:178.82px;top:145.99px;width:0.54px;height:19.04px;background:#ddd;"></div>
<svg class="a" style="left:1429.12px;top:153.79px;width:6.17px;height:4.72px;overflow:visible;" viewBox="0 0 8 6"><path d="M4 5.4 L7.4 0.6 H0.6 Z" fill="#333"/></svg>
<div class="a" style="left:0.0px;top:172.29px;width:1440.0px;height:20.68px;background:#f5f5f5;"></div>
<div class="a" style="left:0.0px;top:192.97px;width:25.39px;height:657.43px;background:#f6f6f6;"></div>
<div class="a" style="left:61.3px;top:172.29px;width:460.47px;height:20.68px;background:#e4e4e4;"></div>
<div class="a" style="left:61.3px;top:191.52px;width:460.47px;height:1.45px;background:#3a7255;"></div>
<div class="a" style="left:0.0px;top:192.51px;width:1440.0px;height:0.91px;background:#d6d6d6;"></div>
<div class="a" style="left:61.3px;top:191.52px;width:460.47px;height:1.45px;background:#3a7255;"></div>
<div class="a" style="left:24.94px;top:172.29px;width:0.91px;height:678.11px;background:#d6d6d6;"></div>
<div class="a" style="left:60.85px;top:174.11px;width:0.91px;height:18.86px;background:#dedede;"></div>
<div class="a" style="left:521.32px;top:174.11px;width:0.91px;height:18.86px;background:#dedede;"></div>
<div class="a" style="left:616.17px;top:174.11px;width:0.91px;height:18.86px;background:#dedede;"></div>
<div class="a" style="left:683.27px;top:174.11px;width:0.91px;height:18.86px;background:#dedede;"></div>
<div class="a" style="left:768.88px;top:174.11px;width:0.91px;height:18.86px;background:#dedede;"></div>
<div class="a" style="left:819.11px;top:174.11px;width:0.91px;height:18.86px;background:#dedede;"></div>
<div class="a" style="left:918.5px;top:174.11px;width:0.91px;height:18.86px;background:#dedede;"></div>
<div class="a" style="left:999.39px;top:174.11px;width:0.91px;height:18.86px;background:#dedede;"></div>
<div class="a" style="left:1104.03px;top:174.11px;width:0.91px;height:18.86px;background:#dedede;"></div>
<div class="a" style="left:1250.39px;top:174.11px;width:0.91px;height:18.86px;background:#dedede;"></div>
<div class="a" style="left:1265.08px;top:174.11px;width:0.91px;height:18.86px;background:#dedede;"></div>
<div class="a" style="left:1318.94px;top:174.11px;width:0.91px;height:18.86px;background:#dedede;"></div>
<div class="a" style="left:1372.81px;top:174.11px;width:0.91px;height:18.86px;background:#dedede;"></div>
<div class="a" style="left:1427.58px;top:174.11px;width:0.91px;height:18.86px;background:#dedede;"></div>
<svg class="a" style="left:7.25px;top:176.64px;width:15.6px;height:13.78px;overflow:visible;" viewBox="0 0 10 9"><path d="M9.4 0.6 V8.4 H0.8 Z" fill="#d0d0d0"/></svg>
<span class="c" style="left:43.35px;top:182.27px;font-size:11px;color:#6e6e6e;">A</span>
<span class="c" style="left:291.54px;top:182.27px;font-size:11px;color:#2a6b45;">B</span>
<span class="c" style="left:569.2px;top:182.27px;font-size:11px;color:#6e6e6e;">C</span>
<span class="c" style="left:650.18px;top:182.27px;font-size:11px;color:#6e6e6e;">D</span>
<span class="c" style="left:726.53px;top:182.27px;font-size:11px;color:#6e6e6e;">E</span>
<span class="c" style="left:794.45px;top:182.27px;font-size:11px;color:#6e6e6e;">F</span>
<span class="c" style="left:869.26px;top:182.27px;font-size:11px;color:#6e6e6e;">G</span>
<span class="c" style="left:959.4px;top:182.27px;font-size:11px;color:#6e6e6e;">H</span>
<span class="c" style="left:1052.16px;top:182.27px;font-size:11px;color:#6e6e6e;">I</span>
<span class="c" style="left:1177.66px;top:182.27px;font-size:11px;color:#6e6e6e;">J</span>
<span class="c" style="left:1258.19px;top:182.27px;font-size:11px;color:#6e6e6e;">K</span>
<span class="c" style="left:1292.46px;top:182.27px;font-size:11px;color:#6e6e6e;">L</span>
<span class="c" style="left:1346.33px;top:182.27px;font-size:11px;color:#6e6e6e;">M</span>
<span class="c" style="left:1400.64px;top:182.27px;font-size:11px;color:#6e6e6e;">N</span>
<div class="a" style="left:0.0px;top:205.39px;width:25.39px;height:0.73px;background:#e4e4e4;"></div>
<span class="c" style="left:12.7px;top:199.5px;font-size:11.2px;color:#8a8a8a;letter-spacing:0.4px;">1</span>
<div class="a" style="left:0.0px;top:218.18px;width:25.39px;height:0.73px;background:#e4e4e4;"></div>
<span class="c" style="left:12.7px;top:212.33px;font-size:11.2px;color:#8a8a8a;letter-spacing:0.4px;">2</span>
<div class="a" style="left:0.0px;top:230.87px;width:25.39px;height:0.73px;background:#e4e4e4;"></div>
<span class="c" style="left:12.7px;top:225.07px;font-size:11.2px;color:#8a8a8a;letter-spacing:0.4px;">3</span>
<div class="a" style="left:0.0px;top:243.2px;width:25.39px;height:0.73px;background:#e4e4e4;"></div>
<span class="c" style="left:12.7px;top:237.58px;font-size:11.2px;color:#8a8a8a;letter-spacing:0.4px;">4</span>
<div class="a" style="left:0.0px;top:255.17px;width:25.39px;height:0.73px;background:#e4e4e4;"></div>
<span class="c" style="left:12.7px;top:249.73px;font-size:11.2px;color:#8a8a8a;letter-spacing:0.4px;">5</span>
<div class="a" style="left:0.0px;top:267.14px;width:25.39px;height:0.73px;background:#e4e4e4;"></div>
<span class="c" style="left:12.7px;top:261.7px;font-size:11.2px;color:#8a8a8a;letter-spacing:0.4px;">6</span>
<div class="a" style="left:0.0px;top:280.17px;width:25.39px;height:0.73px;background:#e4e4e4;"></div>
<span class="c" style="left:12.7px;top:274.2px;font-size:11.2px;color:#8a8a8a;letter-spacing:0.4px;">7</span>
<div class="a" style="left:0.0px;top:293.19px;width:25.39px;height:0.73px;background:#e4e4e4;"></div>
<span class="c" style="left:12.7px;top:287.22px;font-size:11.2px;color:#8a8a8a;letter-spacing:0.4px;">8</span>
<div class="a" style="left:0.0px;top:306.21px;width:25.39px;height:0.73px;background:#e4e4e4;"></div>
<span class="c" style="left:12.7px;top:300.24px;font-size:11.2px;color:#8a8a8a;letter-spacing:0.4px;">9</span>
<div class="a" style="left:0.0px;top:319.23px;width:25.39px;height:0.73px;background:#e4e4e4;"></div>
<span class="c" style="left:12.7px;top:313.26px;font-size:11.2px;color:#8a8a8a;letter-spacing:0.4px;">10</span>
<div class="a" style="left:0.0px;top:332.25px;width:25.39px;height:0.73px;background:#e4e4e4;"></div>
<span class="c" style="left:12.7px;top:326.29px;font-size:11.2px;color:#8a8a8a;letter-spacing:0.4px;">11</span>
<div class="a" style="left:0.0px;top:345.27px;width:25.39px;height:0.73px;background:#e4e4e4;"></div>
<span class="c" style="left:12.7px;top:339.31px;font-size:11.2px;color:#8a8a8a;letter-spacing:0.4px;">12</span>
<div class="a" style="left:0.0px;top:357.82px;width:25.39px;height:0.73px;background:#e4e4e4;"></div>
<span class="c" style="left:12.7px;top:352.09px;font-size:11.2px;color:#8a8a8a;letter-spacing:0.4px;">13</span>
<div class="a" style="left:0.0px;top:370.52px;width:25.39px;height:0.73px;background:#e4e4e4;"></div>
<span class="c" style="left:12.7px;top:364.72px;font-size:11.2px;color:#8a8a8a;letter-spacing:0.4px;">14</span>
<div class="a" style="left:0.0px;top:383.03px;width:25.39px;height:0.73px;background:#e4e4e4;"></div>
<span class="c" style="left:12.7px;top:377.32px;font-size:11.2px;color:#8a8a8a;letter-spacing:0.4px;">15</span>
<div class="a" style="left:0.0px;top:396.0px;width:25.39px;height:0.73px;background:#e4e4e4;"></div>
<span class="c" style="left:12.7px;top:390.06px;font-size:11.2px;color:#8a8a8a;letter-spacing:0.4px;">16</span>
<div class="a" style="left:0.0px;top:408.97px;width:25.39px;height:0.73px;background:#e4e4e4;"></div>
<span class="c" style="left:12.7px;top:403.03px;font-size:11.2px;color:#8a8a8a;letter-spacing:0.4px;">17</span>
<div class="a" style="left:0.0px;top:421.93px;width:25.39px;height:0.73px;background:#e4e4e4;"></div>
<span class="c" style="left:12.7px;top:415.99px;font-size:11.2px;color:#8a8a8a;letter-spacing:0.4px;">18</span>
<div class="a" style="left:0.0px;top:434.9px;width:25.39px;height:0.73px;background:#e4e4e4;"></div>
<span class="c" style="left:12.7px;top:428.96px;font-size:11.2px;color:#8a8a8a;letter-spacing:0.4px;">19</span>
<div class="a" style="left:0.0px;top:447.87px;width:25.39px;height:0.73px;background:#e4e4e4;"></div>
<span class="c" style="left:12.7px;top:441.93px;font-size:11.2px;color:#8a8a8a;letter-spacing:0.4px;">20</span>
<div class="a" style="left:0.0px;top:460.84px;width:25.39px;height:0.73px;background:#e4e4e4;"></div>
<span class="c" style="left:12.7px;top:454.9px;font-size:11.2px;color:#8a8a8a;letter-spacing:0.4px;">21</span>
<div class="a" style="left:0.0px;top:473.8px;width:25.39px;height:0.73px;background:#e4e4e4;"></div>
<span class="c" style="left:12.7px;top:467.86px;font-size:11.2px;color:#8a8a8a;letter-spacing:0.4px;">22</span>
<div class="a" style="left:0.0px;top:486.77px;width:25.39px;height:0.73px;background:#e4e4e4;"></div>
<span class="c" style="left:12.7px;top:480.83px;font-size:11.2px;color:#8a8a8a;letter-spacing:0.4px;">23</span>
<div class="a" style="left:0.0px;top:499.74px;width:25.39px;height:0.73px;background:#e4e4e4;"></div>
<span class="c" style="left:12.7px;top:493.8px;font-size:11.2px;color:#8a8a8a;letter-spacing:0.4px;">24</span>
<div class="a" style="left:0.0px;top:512.71px;width:25.39px;height:0.73px;background:#e4e4e4;"></div>
<span class="c" style="left:12.7px;top:506.77px;font-size:11.2px;color:#8a8a8a;letter-spacing:0.4px;">25</span>
<div class="a" style="left:0.0px;top:525.67px;width:25.39px;height:0.73px;background:#e4e4e4;"></div>
<span class="c" style="left:12.7px;top:519.73px;font-size:11.2px;color:#8a8a8a;letter-spacing:0.4px;">26</span>
<div class="a" style="left:0.0px;top:538.64px;width:25.39px;height:0.73px;background:#e4e4e4;"></div>
<span class="c" style="left:12.7px;top:532.7px;font-size:11.2px;color:#8a8a8a;letter-spacing:0.4px;">27</span>
<div class="a" style="left:0.0px;top:551.61px;width:25.39px;height:0.73px;background:#e4e4e4;"></div>
<span class="c" style="left:12.7px;top:545.67px;font-size:11.2px;color:#8a8a8a;letter-spacing:0.4px;">28</span>
<div class="a" style="left:0.0px;top:564.57px;width:25.39px;height:0.73px;background:#e4e4e4;"></div>
<span class="c" style="left:12.7px;top:558.63px;font-size:11.2px;color:#8a8a8a;letter-spacing:0.4px;">29</span>
<div class="a" style="left:0.0px;top:577.54px;width:25.39px;height:0.73px;background:#e4e4e4;"></div>
<span class="c" style="left:12.7px;top:571.6px;font-size:11.2px;color:#8a8a8a;letter-spacing:0.4px;">30</span>
<div class="a" style="left:0.0px;top:590.51px;width:25.39px;height:0.73px;background:#e4e4e4;"></div>
<span class="c" style="left:12.7px;top:584.57px;font-size:11.2px;color:#8a8a8a;letter-spacing:0.4px;">31</span>
<div class="a" style="left:0.0px;top:603.48px;width:25.39px;height:0.73px;background:#e4e4e4;"></div>
<span class="c" style="left:12.7px;top:597.54px;font-size:11.2px;color:#8a8a8a;letter-spacing:0.4px;">32</span>
<div class="a" style="left:0.0px;top:615.99px;width:25.39px;height:0.73px;background:#e4e4e4;"></div>
<span class="c" style="left:12.7px;top:610.28px;font-size:11.2px;color:#8a8a8a;letter-spacing:0.4px;">33</span>
<div class="a" style="left:0.0px;top:628.01px;width:25.39px;height:0.73px;background:#e4e4e4;"></div>
<span class="c" style="left:12.7px;top:622.55px;font-size:11.2px;color:#8a8a8a;letter-spacing:0.4px;">34</span>
<div class="a" style="left:0.0px;top:640.04px;width:25.39px;height:0.73px;background:#e4e4e4;"></div>
<span class="c" style="left:12.7px;top:634.57px;font-size:11.2px;color:#8a8a8a;letter-spacing:0.4px;">35</span>
<div class="a" style="left:0.0px;top:652.06px;width:25.39px;height:0.73px;background:#e4e4e4;"></div>
<span class="c" style="left:12.7px;top:646.59px;font-size:11.2px;color:#8a8a8a;letter-spacing:0.4px;">36</span>
<div class="a" style="left:0.0px;top:664.09px;width:25.39px;height:0.73px;background:#e4e4e4;"></div>
<span class="c" style="left:12.7px;top:658.62px;font-size:11.2px;color:#8a8a8a;letter-spacing:0.4px;">37</span>
<div class="a" style="left:0.0px;top:676.11px;width:25.39px;height:0.73px;background:#e4e4e4;"></div>
<span class="c" style="left:12.7px;top:670.64px;font-size:11.2px;color:#8a8a8a;letter-spacing:0.4px;">38</span>
<div class="a" style="left:0.0px;top:688.14px;width:25.39px;height:0.73px;background:#e4e4e4;"></div>
<span class="c" style="left:12.7px;top:682.67px;font-size:11.2px;color:#8a8a8a;letter-spacing:0.4px;">39</span>
<div class="a" style="left:0.0px;top:688.5px;width:25.39px;height:12.02px;background:#e6e6e6;"></div>
<div class="a" style="left:23.58px;top:687.95px;width:1.99px;height:13.11px;background:#2f6b4a;"></div>
<div class="a" style="left:0.0px;top:700.16px;width:25.39px;height:0.73px;background:#e4e4e4;"></div>
<span class="c" style="left:12.7px;top:694.69px;font-size:11.2px;color:#3d7a58;letter-spacing:0.4px;">40</span>
<div class="a" style="left:0.0px;top:712.18px;width:25.39px;height:0.73px;background:#e4e4e4;"></div>
<span class="c" style="left:12.7px;top:706.72px;font-size:11.2px;color:#8a8a8a;letter-spacing:0.4px;">41</span>
<div class="a" style="left:0.0px;top:724.21px;width:25.39px;height:0.73px;background:#e4e4e4;"></div>
<span class="c" style="left:12.7px;top:718.74px;font-size:11.2px;color:#8a8a8a;letter-spacing:0.4px;">42</span>
<div class="a" style="left:0.0px;top:736.23px;width:25.39px;height:0.73px;background:#e4e4e4;"></div>
<span class="c" style="left:12.7px;top:730.76px;font-size:11.2px;color:#8a8a8a;letter-spacing:0.4px;">43</span>
<div class="a" style="left:0.0px;top:748.26px;width:25.39px;height:0.73px;background:#e4e4e4;"></div>
<span class="c" style="left:12.7px;top:742.79px;font-size:11.2px;color:#8a8a8a;letter-spacing:0.4px;">44</span>
<div class="a" style="left:0.0px;top:760.28px;width:25.39px;height:0.73px;background:#e4e4e4;"></div>
<span class="c" style="left:12.7px;top:754.81px;font-size:11.2px;color:#8a8a8a;letter-spacing:0.4px;">45</span>
<div class="a" style="left:0.0px;top:772.3px;width:25.39px;height:0.73px;background:#e4e4e4;"></div>
<span class="c" style="left:12.7px;top:766.84px;font-size:11.2px;color:#8a8a8a;letter-spacing:0.4px;">46</span>
<div class="a" style="left:0.0px;top:784.33px;width:25.39px;height:0.73px;background:#e4e4e4;"></div>
<span class="c" style="left:12.7px;top:778.86px;font-size:11.2px;color:#8a8a8a;letter-spacing:0.4px;">47</span>
<div class="a" style="left:0.0px;top:796.35px;width:25.39px;height:0.73px;background:#e4e4e4;"></div>
<span class="c" style="left:12.7px;top:790.88px;font-size:11.2px;color:#8a8a8a;letter-spacing:0.4px;">48</span>
<div class="a" style="left:0.0px;top:808.38px;width:25.39px;height:0.73px;background:#e4e4e4;"></div>
<span class="c" style="left:12.7px;top:802.91px;font-size:11.2px;color:#8a8a8a;letter-spacing:0.4px;">49</span>
<div class="a" style="left:0.0px;top:820.4px;width:25.39px;height:0.73px;background:#e4e4e4;"></div>
<span class="c" style="left:12.7px;top:814.93px;font-size:11.2px;color:#8a8a8a;letter-spacing:0.4px;">50</span>
<div class="a" style="left:0.0px;top:832.43px;width:25.39px;height:0.73px;background:#e4e4e4;"></div>
<span class="c" style="left:12.7px;top:826.96px;font-size:11.2px;color:#8a8a8a;letter-spacing:0.4px;">51</span>
<div class="a" style="left:0.0px;top:844.45px;width:25.39px;height:0.73px;background:#e4e4e4;"></div>
<span class="c" style="left:12.7px;top:838.98px;font-size:11.2px;color:#8a8a8a;letter-spacing:0.4px;">52</span>
<span class="c" style="left:12.7px;top:851.01px;font-size:11.2px;color:#8a8a8a;letter-spacing:0.4px;">53</span>
<div class="cell" style="left:819.57px;top:193.88px;width:99.39px;height:12.88px;justify-content:flex-end;padding-right:2.6px;font-size:9px;">Legend:</div>
<div class="a" style="left:918.95px;top:192.88px;width:80.89px;height:12.88px;background:#ffffcc;"></div>
<div class="cell" style="left:918.95px;top:193.88px;width:80.89px;height:12.88px;justify-content:center;font-size:9px;">Input required</div>
<div class="a" style="left:999.84px;top:192.88px;width:104.64px;height:12.88px;background:#ffccff;"></div>
<div class="cell" style="left:999.84px;top:193.88px;width:104.64px;height:12.88px;justify-content:center;font-size:9px;">Formularised</div>
<div class="a" style="left:1104.48px;top:192.88px;width:146.36px;height:12.88px;background:#c6e0b4;"></div>
<div class="cell" style="left:1104.48px;top:193.88px;width:146.36px;height:12.88px;justify-content:center;font-size:9px;">Choose from dropdown menu</div>
<div class="cell" style="left:61.3px;top:219.54px;width:460.47px;height:12.7px;justify-content:center;font-size:9px;">KPI</div>
<div class="cell" style="left:521.77px;top:219.54px;width:94.85px;height:12.7px;justify-content:center;font-size:9px;">Measurement</div>
<div class="cell" style="left:616.62px;top:219.54px;width:67.1px;height:12.7px;justify-content:center;font-size:9px;">Target</div>
<div class="cell" style="left:61.3px;top:232.23px;width:460.47px;height:12.33px;justify-content:flex-start;padding-left:2.6px;font-size:9px;">[ABC#15] Superior&#x27;s rating</div>
<div class="cell" style="left:521.77px;top:232.23px;width:94.85px;height:12.33px;justify-content:center;font-size:9px;">Rating Index</div>
<div class="cell" style="left:616.62px;top:232.23px;width:67.1px;height:12.33px;justify-content:center;font-size:9px;">5.0</div>
<div class="cell" style="left:61.3px;top:256.54px;width:460.47px;height:11.97px;justify-content:flex-start;padding-left:2.6px;font-size:9px;font-weight:bold;font-style:italic;color:#1c58ae;overflow:visible;font-size:9.4px;letter-spacing:0.2px;">Parameters</div>
<div class="cell" style="left:61.3px;top:268.51px;width:460.47px;height:13.02px;justify-content:flex-start;padding-left:2.6px;font-size:9px;">Rating</div>
<div class="cell" style="left:521.77px;top:268.51px;width:94.85px;height:13.02px;justify-content:center;font-size:9px;">Points</div>
<div class="cell" style="left:61.3px;top:281.53px;width:460.47px;height:13.02px;justify-content:flex-start;padding-left:2.6px;font-size:9px;">Poor</div>
<div class="cell" style="left:521.77px;top:281.53px;width:94.85px;height:13.02px;justify-content:center;font-size:9px;">1.0</div>
<div class="cell" style="left:61.3px;top:294.55px;width:460.47px;height:13.02px;justify-content:flex-start;padding-left:2.6px;font-size:9px;">Dissatisfied</div>
<div class="cell" style="left:521.77px;top:294.55px;width:94.85px;height:13.02px;justify-content:center;font-size:9px;">2.0</div>
<div class="cell" style="left:61.3px;top:307.57px;width:460.47px;height:13.02px;justify-content:flex-start;padding-left:2.6px;font-size:9px;">Somewhat Satisfied</div>
<div class="cell" style="left:521.77px;top:307.57px;width:94.85px;height:13.02px;justify-content:center;font-size:9px;">3.0</div>
<div class="cell" style="left:61.3px;top:320.59px;width:460.47px;height:13.02px;justify-content:flex-start;padding-left:2.6px;font-size:9px;">Satisfied</div>
<div class="cell" style="left:521.77px;top:320.59px;width:94.85px;height:13.02px;justify-content:center;font-size:9px;">4.0</div>
<div class="cell" style="left:61.3px;top:333.61px;width:460.47px;height:13.02px;justify-content:flex-start;padding-left:2.6px;font-size:9px;">Very Satisfied</div>
<div class="cell" style="left:521.77px;top:333.61px;width:94.85px;height:13.02px;justify-content:center;font-size:9px;">5.0</div>
<div class="cell" style="left:61.3px;top:359.19px;width:460.47px;height:12.7px;justify-content:flex-start;padding-left:2.6px;font-size:9px;font-weight:bold;font-style:italic;color:#1c58ae;overflow:visible;font-size:9.4px;letter-spacing:0.2px;">These items may be edited with relevant items, where necessary</div>
<div class="cell" style="left:521.77px;top:359.19px;width:161.95px;height:12.7px;justify-content:center;font-size:9px;font-weight:bold;color:#1f2a5c;font-size:9.5px;letter-spacing:0.3px;">Receptionist</div>
<div class="cell" style="left:521.77px;top:371.88px;width:94.85px;height:12.51px;justify-content:center;font-size:9px;">Rating</div>
<div class="cell" style="left:616.62px;top:371.88px;width:67.1px;height:12.51px;justify-content:center;font-size:9px;">Points</div>
<div class="cell" style="left:683.73px;top:359.19px;width:135.84px;height:12.7px;justify-content:center;font-size:9px;font-weight:bold;color:#1f2a5c;font-size:9.5px;letter-spacing:0.3px;">Tea Lady</div>
<div class="cell" style="left:683.73px;top:371.88px;width:85.6px;height:12.51px;justify-content:center;font-size:9px;">Rating</div>
<div class="cell" style="left:769.33px;top:371.88px;width:50.24px;height:12.51px;justify-content:center;font-size:9px;">Points</div>
<div class="cell" style="left:819.57px;top:359.19px;width:180.27px;height:12.7px;justify-content:center;font-size:9px;font-weight:bold;color:#1f2a5c;font-size:9.5px;letter-spacing:0.3px;">Despatch Clerk</div>
<div class="cell" style="left:819.57px;top:371.88px;width:99.39px;height:12.51px;justify-content:center;font-size:9px;">Rating</div>
<div class="cell" style="left:918.95px;top:371.88px;width:80.89px;height:12.51px;justify-content:center;font-size:9px;">Points</div>
<div class="cell" style="left:999.84px;top:359.19px;width:251.0px;height:12.7px;justify-content:center;font-size:9px;font-weight:bold;color:#1f2a5c;font-size:9.5px;letter-spacing:0.3px;">Driver</div>
<div class="cell" style="left:999.84px;top:371.88px;width:104.64px;height:12.51px;justify-content:center;font-size:9px;">Rating</div>
<div class="cell" style="left:1104.48px;top:371.88px;width:146.36px;height:12.51px;justify-content:center;font-size:9px;">Points</div>
<div class="cell" style="left:25.39px;top:371.88px;width:35.91px;height:12.51px;justify-content:center;font-size:9px;font-weight:bold;font-style:italic;">#</div>
<div class="cell" style="left:61.3px;top:371.88px;width:460.47px;height:12.51px;justify-content:center;font-size:9px;">Item</div>
<div class="cell" style="left:25.39px;top:384.40px;width:35.91px;height:12.97px;justify-content:center;font-size:9px;">1</div>
<div class="a" style="left:61.3px;top:383.4px;width:460.47px;height:12.97px;background:#ffffcc;"></div>
<div class="cell" style="left:61.3px;top:384.40px;width:460.47px;height:12.97px;justify-content:flex-start;padding-left:2.6px;font-size:9px;white-space:pre;">Performs job responsibilities in accordance with company policies, procedures, safety, and applicable laws</div>
<div class="cell" style="left:25.39px;top:397.36px;width:35.91px;height:12.97px;justify-content:center;font-size:9px;">2</div>
<div class="a" style="left:61.3px;top:396.36px;width:460.47px;height:12.97px;background:#ffffcc;"></div>
<div class="cell" style="left:61.3px;top:397.36px;width:460.47px;height:12.97px;justify-content:flex-start;padding-left:2.6px;font-size:9px;white-space:pre;">Professionalism and ethics – maintain strict confidentiality / interact professionally / committed / reliable</div>
<div class="cell" style="left:25.39px;top:410.33px;width:35.91px;height:12.97px;justify-content:center;font-size:9px;">3</div>
<div class="a" style="left:61.3px;top:409.33px;width:460.47px;height:12.97px;background:#ffffcc;"></div>
<div class="cell" style="left:61.3px;top:410.33px;width:460.47px;height:12.97px;justify-content:flex-start;padding-left:2.6px;font-size:9px;white-space:pre;">Zero complaint from internal/external customers</div>
<div class="cell" style="left:25.39px;top:423.30px;width:35.91px;height:12.97px;justify-content:center;font-size:9px;">4</div>
<div class="a" style="left:61.3px;top:422.3px;width:460.47px;height:12.97px;background:#ffffcc;"></div>
<div class="cell" style="left:61.3px;top:423.30px;width:460.47px;height:12.97px;justify-content:flex-start;padding-left:2.6px;font-size:9px;white-space:pre;">Systematic documentation &amp; record keeping</div>
<div class="cell" style="left:25.39px;top:436.26px;width:35.91px;height:12.97px;justify-content:center;font-size:9px;">5</div>
<div class="a" style="left:61.3px;top:435.26px;width:460.47px;height:12.97px;background:#ffffcc;"></div>
<div class="cell" style="left:61.3px;top:436.26px;width:460.47px;height:12.97px;justify-content:flex-start;padding-left:2.6px;font-size:9px;white-space:pre;">Tidiness of reception area</div>
<div class="cell" style="left:25.39px;top:449.23px;width:35.91px;height:12.97px;justify-content:center;font-size:9px;">6</div>
<div class="a" style="left:61.3px;top:448.23px;width:460.47px;height:12.97px;background:#ffffcc;"></div>
<div class="cell" style="left:61.3px;top:449.23px;width:460.47px;height:12.97px;justify-content:flex-start;padding-left:2.6px;font-size:9px;white-space:pre;">Tidiness of Board Room &amp; Waiting rooms</div>
<div class="cell" style="left:25.39px;top:462.20px;width:35.91px;height:12.97px;justify-content:center;font-size:9px;">7</div>
<div class="a" style="left:61.3px;top:461.2px;width:460.47px;height:12.97px;background:#ffffcc;"></div>
<div class="cell" style="left:61.3px;top:462.20px;width:460.47px;height:12.97px;justify-content:flex-start;padding-left:2.6px;font-size:9px;white-space:pre;">Clearance of meeting rooms immediately after each meeting</div>
<div class="cell" style="left:25.39px;top:475.17px;width:35.91px;height:12.97px;justify-content:center;font-size:9px;">8</div>
<div class="a" style="left:61.3px;top:474.17px;width:460.47px;height:12.97px;background:#ffffcc;"></div>
<div class="cell" style="left:61.3px;top:475.17px;width:460.47px;height:12.97px;justify-content:flex-start;padding-left:2.6px;font-size:9px;white-space:pre;">Pantry cleanliness, adequacy of supplies &amp; cleanliness of fridge at all times</div>
<div class="cell" style="left:25.39px;top:488.13px;width:35.91px;height:12.97px;justify-content:center;font-size:9px;">9</div>
<div class="a" style="left:61.3px;top:487.13px;width:460.47px;height:12.97px;background:#ffffcc;"></div>
<div class="cell" style="left:61.3px;top:488.13px;width:460.47px;height:12.97px;justify-content:flex-start;padding-left:2.6px;font-size:9px;white-space:pre;">Accuracy of locations</div>
<div class="cell" style="left:25.39px;top:501.10px;width:35.91px;height:12.97px;justify-content:center;font-size:9px;">10</div>
<div class="a" style="left:61.3px;top:500.1px;width:460.47px;height:12.97px;background:#ffffcc;"></div>
<div class="cell" style="left:61.3px;top:501.10px;width:460.47px;height:12.97px;justify-content:flex-start;padding-left:2.6px;font-size:9px;white-space:pre;">Punctuality</div>
<div class="cell" style="left:25.39px;top:514.07px;width:35.91px;height:12.97px;justify-content:center;font-size:9px;">11</div>
<div class="a" style="left:61.3px;top:513.07px;width:460.47px;height:12.97px;background:#ffffcc;"></div>
<div class="cell" style="left:61.3px;top:514.07px;width:460.47px;height:12.97px;justify-content:flex-start;padding-left:2.6px;font-size:9px;white-space:pre;">Knowledge and attention</div>
<div class="cell" style="left:25.39px;top:527.04px;width:35.91px;height:12.97px;justify-content:center;font-size:9px;">12</div>
<div class="a" style="left:61.3px;top:526.04px;width:460.47px;height:12.97px;background:#ffffcc;"></div>
<div class="cell" style="left:61.3px;top:527.04px;width:460.47px;height:12.97px;justify-content:flex-start;padding-left:2.6px;font-size:9px;white-space:pre;">Compliance to Traffic Rules &amp; Regulations</div>
<div class="cell" style="left:25.39px;top:540.00px;width:35.91px;height:12.97px;justify-content:center;font-size:9px;">13</div>
<div class="a" style="left:61.3px;top:539.0px;width:460.47px;height:12.97px;background:#ffffcc;"></div>
<div class="cell" style="left:61.3px;top:540.00px;width:460.47px;height:12.97px;justify-content:flex-start;padding-left:2.6px;font-size:9px;white-space:pre;">Courtesy on the road</div>
<div class="cell" style="left:25.39px;top:552.97px;width:35.91px;height:12.97px;justify-content:center;font-size:9px;">14</div>
<div class="a" style="left:61.3px;top:551.97px;width:460.47px;height:12.97px;background:#ffffcc;"></div>
<div class="cell" style="left:61.3px;top:552.97px;width:460.47px;height:12.97px;justify-content:flex-start;padding-left:2.6px;font-size:9px;white-space:pre;">Vehicle Cleanliness:  Inside</div>
<div class="cell" style="left:25.39px;top:565.94px;width:35.91px;height:12.97px;justify-content:center;font-size:9px;">15</div>
<div class="a" style="left:61.3px;top:564.94px;width:460.47px;height:12.97px;background:#ffffcc;"></div>
<div class="cell" style="left:61.3px;top:565.94px;width:460.47px;height:12.97px;justify-content:flex-start;padding-left:2.6px;font-size:9px;white-space:pre;">Vehicle Cleanliness:  Outside</div>
<div class="cell" style="left:25.39px;top:578.90px;width:35.91px;height:12.97px;justify-content:center;font-size:9px;">16</div>
<div class="a" style="left:61.3px;top:577.9px;width:460.47px;height:12.97px;background:#ffffcc;"></div>
<div class="cell" style="left:61.3px;top:578.90px;width:460.47px;height:12.97px;justify-content:flex-start;padding-left:2.6px;font-size:9px;white-space:pre;">Vehicle Maintenance:  Mechanically sound</div>
<div class="cell" style="left:25.39px;top:591.87px;width:35.91px;height:12.97px;justify-content:center;font-size:9px;">17</div>
<div class="a" style="left:61.3px;top:590.87px;width:460.47px;height:12.97px;background:#ffffcc;"></div>
<div class="cell" style="left:61.3px;top:591.87px;width:460.47px;height:12.97px;justify-content:flex-start;padding-left:2.6px;font-size:9px;white-space:pre;">Safe driving habits</div>
<div class="a" style="left:521.77px;top:383.4px;width:94.85px;height:12.97px;background:#c6e0b4;"></div>
<div class="cell" style="left:521.77px;top:384.40px;width:94.85px;height:12.97px;justify-content:center;font-size:9px;">Somewhat Satisfied</div>
<div class="a" style="left:616.62px;top:383.4px;width:67.1px;height:12.97px;background:#ffccff;"></div>
<div class="cell" style="left:616.62px;top:384.40px;width:67.1px;height:12.97px;justify-content:center;font-size:9px;font-weight:bold;font-size:9.5px;letter-spacing:0.3px;">3.0</div>
<div class="a" style="left:521.77px;top:396.36px;width:94.85px;height:12.97px;background:#c6e0b4;"></div>
<div class="cell" style="left:521.77px;top:397.36px;width:94.85px;height:12.97px;justify-content:center;font-size:9px;">Satisfied</div>
<div class="a" style="left:616.62px;top:396.36px;width:67.1px;height:12.97px;background:#ffccff;"></div>
<div class="cell" style="left:616.62px;top:397.36px;width:67.1px;height:12.97px;justify-content:center;font-size:9px;font-weight:bold;font-size:9.5px;letter-spacing:0.3px;">4.0</div>
<div class="a" style="left:521.77px;top:409.33px;width:94.85px;height:12.97px;background:#c6e0b4;"></div>
<div class="cell" style="left:521.77px;top:410.33px;width:94.85px;height:12.97px;justify-content:center;font-size:9px;">Dissatisfied</div>
<div class="a" style="left:616.62px;top:409.33px;width:67.1px;height:12.97px;background:#ffccff;"></div>
<div class="cell" style="left:616.62px;top:410.33px;width:67.1px;height:12.97px;justify-content:center;font-size:9px;font-weight:bold;font-size:9.5px;letter-spacing:0.3px;">2.0</div>
<div class="a" style="left:521.77px;top:422.3px;width:94.85px;height:12.97px;background:#c6e0b4;"></div>
<div class="cell" style="left:521.77px;top:423.30px;width:94.85px;height:12.97px;justify-content:center;font-size:9px;">Satisfied</div>
<div class="a" style="left:616.62px;top:422.3px;width:67.1px;height:12.97px;background:#ffccff;"></div>
<div class="cell" style="left:616.62px;top:423.30px;width:67.1px;height:12.97px;justify-content:center;font-size:9px;font-weight:bold;font-size:9.5px;letter-spacing:0.3px;">4.0</div>
<div class="a" style="left:521.77px;top:435.26px;width:94.85px;height:12.97px;background:#c6e0b4;"></div>
<div class="cell" style="left:521.77px;top:436.26px;width:94.85px;height:12.97px;justify-content:center;font-size:9px;">Somewhat Satisfied</div>
<div class="a" style="left:616.62px;top:435.26px;width:67.1px;height:12.97px;background:#ffccff;"></div>
<div class="cell" style="left:616.62px;top:436.26px;width:67.1px;height:12.97px;justify-content:center;font-size:9px;font-weight:bold;font-size:9.5px;letter-spacing:0.3px;">3.0</div>
<div class="a" style="left:521.77px;top:448.23px;width:94.85px;height:12.97px;background:#c6e0b4;"></div>
<div class="cell" style="left:521.77px;top:449.23px;width:94.85px;height:12.97px;justify-content:center;font-size:9px;">Satisfied</div>
<div class="a" style="left:616.62px;top:448.23px;width:67.1px;height:12.97px;background:#ffccff;"></div>
<div class="cell" style="left:616.62px;top:449.23px;width:67.1px;height:12.97px;justify-content:center;font-size:9px;font-weight:bold;font-size:9.5px;letter-spacing:0.3px;">4.0</div>
<div class="a" style="left:683.73px;top:383.4px;width:85.6px;height:12.97px;background:#c6e0b4;"></div>
<div class="cell" style="left:683.73px;top:384.40px;width:85.6px;height:12.97px;justify-content:center;font-size:9px;">Somewhat Satisfied</div>
<div class="a" style="left:769.33px;top:383.4px;width:50.24px;height:12.97px;background:#ffccff;"></div>
<div class="cell" style="left:769.33px;top:384.40px;width:50.24px;height:12.97px;justify-content:center;font-size:9px;font-weight:bold;font-size:9.5px;letter-spacing:0.3px;">3.0</div>
<div class="a" style="left:683.73px;top:409.33px;width:85.6px;height:12.97px;background:#c6e0b4;"></div>
<div class="cell" style="left:683.73px;top:410.33px;width:85.6px;height:12.97px;justify-content:center;font-size:9px;">Dissatisfied</div>
<div class="a" style="left:769.33px;top:409.33px;width:50.24px;height:12.97px;background:#ffccff;"></div>
<div class="cell" style="left:769.33px;top:410.33px;width:50.24px;height:12.97px;justify-content:center;font-size:9px;font-weight:bold;font-size:9.5px;letter-spacing:0.3px;">2.0</div>
<div class="a" style="left:683.73px;top:461.2px;width:85.6px;height:12.97px;background:#c6e0b4;"></div>
<div class="cell" style="left:683.73px;top:462.20px;width:85.6px;height:12.97px;justify-content:center;font-size:9px;">Satisfied</div>
<div class="a" style="left:769.33px;top:461.2px;width:50.24px;height:12.97px;background:#ffccff;"></div>
<div class="cell" style="left:769.33px;top:462.20px;width:50.24px;height:12.97px;justify-content:center;font-size:9px;font-weight:bold;font-size:9.5px;letter-spacing:0.3px;">4.0</div>
<div class="a" style="left:683.73px;top:474.17px;width:85.6px;height:12.97px;background:#c6e0b4;"></div>
<div class="cell" style="left:683.73px;top:475.17px;width:85.6px;height:12.97px;justify-content:center;font-size:9px;">Satisfied</div>
<div class="a" style="left:769.33px;top:474.17px;width:50.24px;height:12.97px;background:#ffccff;"></div>
<div class="cell" style="left:769.33px;top:475.17px;width:50.24px;height:12.97px;justify-content:center;font-size:9px;font-weight:bold;font-size:9.5px;letter-spacing:0.3px;">4.0</div>
<div class="a" style="left:819.57px;top:383.4px;width:99.39px;height:12.97px;background:#c6e0b4;"></div>
<div class="cell" style="left:819.57px;top:384.40px;width:99.39px;height:12.97px;justify-content:center;font-size:9px;">Somewhat Satisfied</div>
<div class="a" style="left:918.95px;top:383.4px;width:80.89px;height:12.97px;background:#ffccff;"></div>
<div class="cell" style="left:918.95px;top:384.40px;width:80.89px;height:12.97px;justify-content:center;font-size:9px;font-weight:bold;font-size:9.5px;letter-spacing:0.3px;">3.0</div>
<div class="a" style="left:819.57px;top:396.36px;width:99.39px;height:12.97px;background:#c6e0b4;"></div>
<div class="cell" style="left:819.57px;top:397.36px;width:99.39px;height:12.97px;justify-content:center;font-size:9px;">Somewhat Satisfied</div>
<div class="a" style="left:918.95px;top:396.36px;width:80.89px;height:12.97px;background:#ffccff;"></div>
<div class="cell" style="left:918.95px;top:397.36px;width:80.89px;height:12.97px;justify-content:center;font-size:9px;font-weight:bold;font-size:9.5px;letter-spacing:0.3px;">3.0</div>
<div class="a" style="left:819.57px;top:409.33px;width:99.39px;height:12.97px;background:#c6e0b4;"></div>
<div class="cell" style="left:819.57px;top:410.33px;width:99.39px;height:12.97px;justify-content:center;font-size:9px;">Satisfied</div>
<div class="a" style="left:918.95px;top:409.33px;width:80.89px;height:12.97px;background:#ffccff;"></div>
<div class="cell" style="left:918.95px;top:410.33px;width:80.89px;height:12.97px;justify-content:center;font-size:9px;font-weight:bold;font-size:9.5px;letter-spacing:0.3px;">4.0</div>
<div class="a" style="left:819.57px;top:422.3px;width:99.39px;height:12.97px;background:#c6e0b4;"></div>
<div class="cell" style="left:819.57px;top:423.30px;width:99.39px;height:12.97px;justify-content:center;font-size:9px;">Satisfied</div>
<div class="a" style="left:918.95px;top:422.3px;width:80.89px;height:12.97px;background:#ffccff;"></div>
<div class="cell" style="left:918.95px;top:423.30px;width:80.89px;height:12.97px;justify-content:center;font-size:9px;font-weight:bold;font-size:9.5px;letter-spacing:0.3px;">4.0</div>
<div class="a" style="left:819.57px;top:487.13px;width:99.39px;height:12.97px;background:#c6e0b4;"></div>
<div class="cell" style="left:819.57px;top:488.13px;width:99.39px;height:12.97px;justify-content:center;font-size:9px;">Satisfied</div>
<div class="a" style="left:918.95px;top:487.13px;width:80.89px;height:12.97px;background:#ffccff;"></div>
<div class="cell" style="left:918.95px;top:488.13px;width:80.89px;height:12.97px;justify-content:center;font-size:9px;font-weight:bold;font-size:9.5px;letter-spacing:0.3px;">4.0</div>
<div class="a" style="left:819.57px;top:500.1px;width:99.39px;height:12.97px;background:#c6e0b4;"></div>
<div class="cell" style="left:819.57px;top:501.10px;width:99.39px;height:12.97px;justify-content:center;font-size:9px;">Satisfied</div>
<div class="a" style="left:918.95px;top:500.1px;width:80.89px;height:12.97px;background:#ffccff;"></div>
<div class="cell" style="left:918.95px;top:501.10px;width:80.89px;height:12.97px;justify-content:center;font-size:9px;font-weight:bold;font-size:9.5px;letter-spacing:0.3px;">4.0</div>
<div class="a" style="left:999.84px;top:383.4px;width:104.64px;height:12.97px;background:#c6e0b4;"></div>
<div class="cell" style="left:999.84px;top:384.40px;width:104.64px;height:12.97px;justify-content:center;font-size:9px;">Somewhat Satisfied</div>
<div class="a" style="left:1104.48px;top:383.4px;width:146.36px;height:12.97px;background:#ffccff;"></div>
<div class="cell" style="left:1104.48px;top:384.40px;width:146.36px;height:12.97px;justify-content:center;font-size:9px;font-weight:bold;font-size:9.5px;letter-spacing:0.3px;">3.0</div>
<div class="a" style="left:999.84px;top:396.36px;width:104.64px;height:12.97px;background:#c6e0b4;"></div>
<div class="cell" style="left:999.84px;top:397.36px;width:104.64px;height:12.97px;justify-content:center;font-size:9px;">Somewhat Satisfied</div>
<div class="a" style="left:1104.48px;top:396.36px;width:146.36px;height:12.97px;background:#ffccff;"></div>
<div class="cell" style="left:1104.48px;top:397.36px;width:146.36px;height:12.97px;justify-content:center;font-size:9px;font-weight:bold;font-size:9.5px;letter-spacing:0.3px;">3.0</div>
<div class="a" style="left:999.84px;top:409.33px;width:104.64px;height:12.97px;background:#c6e0b4;"></div>
<div class="cell" style="left:999.84px;top:410.33px;width:104.64px;height:12.97px;justify-content:center;font-size:9px;">Satisfied</div>
<div class="a" style="left:1104.48px;top:409.33px;width:146.36px;height:12.97px;background:#ffccff;"></div>
<div class="cell" style="left:1104.48px;top:410.33px;width:146.36px;height:12.97px;justify-content:center;font-size:9px;font-weight:bold;font-size:9.5px;letter-spacing:0.3px;">4.0</div>
<div class="a" style="left:999.84px;top:487.13px;width:104.64px;height:12.97px;background:#c6e0b4;"></div>
<div class="cell" style="left:999.84px;top:488.13px;width:104.64px;height:12.97px;justify-content:center;font-size:9px;">Satisfied</div>
<div class="a" style="left:1104.48px;top:487.13px;width:146.36px;height:12.97px;background:#ffccff;"></div>
<div class="cell" style="left:1104.48px;top:488.13px;width:146.36px;height:12.97px;justify-content:center;font-size:9px;font-weight:bold;font-size:9.5px;letter-spacing:0.3px;">4.0</div>
<div class="a" style="left:999.84px;top:500.1px;width:104.64px;height:12.97px;background:#c6e0b4;"></div>
<div class="cell" style="left:999.84px;top:501.10px;width:104.64px;height:12.97px;justify-content:center;font-size:9px;">Satisfied</div>
<div class="a" style="left:1104.48px;top:500.1px;width:146.36px;height:12.97px;background:#ffccff;"></div>
<div class="cell" style="left:1104.48px;top:501.10px;width:146.36px;height:12.97px;justify-content:center;font-size:9px;font-weight:bold;font-size:9.5px;letter-spacing:0.3px;">4.0</div>
<div class="a" style="left:999.84px;top:513.07px;width:104.64px;height:12.97px;background:#c6e0b4;"></div>
<div class="cell" style="left:999.84px;top:514.07px;width:104.64px;height:12.97px;justify-content:center;font-size:9px;">Satisfied</div>
<div class="a" style="left:1104.48px;top:513.07px;width:146.36px;height:12.97px;background:#ffccff;"></div>
<div class="cell" style="left:1104.48px;top:514.07px;width:146.36px;height:12.97px;justify-content:center;font-size:9px;font-weight:bold;font-size:9.5px;letter-spacing:0.3px;">4.0</div>
<div class="a" style="left:999.84px;top:526.04px;width:104.64px;height:12.97px;background:#c6e0b4;"></div>
<div class="cell" style="left:999.84px;top:527.04px;width:104.64px;height:12.97px;justify-content:center;font-size:9px;">Satisfied</div>
<div class="a" style="left:1104.48px;top:526.04px;width:146.36px;height:12.97px;background:#ffccff;"></div>
<div class="cell" style="left:1104.48px;top:527.04px;width:146.36px;height:12.97px;justify-content:center;font-size:9px;font-weight:bold;font-size:9.5px;letter-spacing:0.3px;">4.0</div>
<div class="a" style="left:999.84px;top:539.0px;width:104.64px;height:12.97px;background:#c6e0b4;"></div>
<div class="cell" style="left:999.84px;top:540.00px;width:104.64px;height:12.97px;justify-content:center;font-size:9px;">Satisfied</div>
<div class="a" style="left:1104.48px;top:539.0px;width:146.36px;height:12.97px;background:#ffccff;"></div>
<div class="cell" style="left:1104.48px;top:540.00px;width:146.36px;height:12.97px;justify-content:center;font-size:9px;font-weight:bold;font-size:9.5px;letter-spacing:0.3px;">4.0</div>
<div class="a" style="left:999.84px;top:551.97px;width:104.64px;height:12.97px;background:#c6e0b4;"></div>
<div class="cell" style="left:999.84px;top:552.97px;width:104.64px;height:12.97px;justify-content:center;font-size:9px;">Satisfied</div>
<div class="a" style="left:1104.48px;top:551.97px;width:146.36px;height:12.97px;background:#ffccff;"></div>
<div class="cell" style="left:1104.48px;top:552.97px;width:146.36px;height:12.97px;justify-content:center;font-size:9px;font-weight:bold;font-size:9.5px;letter-spacing:0.3px;">4.0</div>
<div class="a" style="left:999.84px;top:564.94px;width:104.64px;height:12.97px;background:#c6e0b4;"></div>
<div class="cell" style="left:999.84px;top:565.94px;width:104.64px;height:12.97px;justify-content:center;font-size:9px;">Satisfied</div>
<div class="a" style="left:1104.48px;top:564.94px;width:146.36px;height:12.97px;background:#ffccff;"></div>
<div class="cell" style="left:1104.48px;top:565.94px;width:146.36px;height:12.97px;justify-content:center;font-size:9px;font-weight:bold;font-size:9.5px;letter-spacing:0.3px;">4.0</div>
<div class="a" style="left:999.84px;top:577.9px;width:104.64px;height:12.97px;background:#c6e0b4;"></div>
<div class="cell" style="left:999.84px;top:578.90px;width:104.64px;height:12.97px;justify-content:center;font-size:9px;">Satisfied</div>
<div class="a" style="left:1104.48px;top:577.9px;width:146.36px;height:12.97px;background:#ffccff;"></div>
<div class="cell" style="left:1104.48px;top:578.90px;width:146.36px;height:12.97px;justify-content:center;font-size:9px;font-weight:bold;font-size:9.5px;letter-spacing:0.3px;">4.0</div>
<div class="a" style="left:999.84px;top:590.87px;width:104.64px;height:12.97px;background:#c6e0b4;"></div>
<div class="cell" style="left:999.84px;top:591.87px;width:104.64px;height:12.97px;justify-content:center;font-size:9px;">Satisfied</div>
<div class="a" style="left:1104.48px;top:590.87px;width:146.36px;height:12.97px;background:#ffccff;"></div>
<div class="cell" style="left:1104.48px;top:591.87px;width:146.36px;height:12.97px;justify-content:center;font-size:9px;font-weight:bold;font-size:9.5px;letter-spacing:0.3px;">4.0</div>
<div class="cell" style="left:61.3px;top:604.84px;width:460.47px;height:12.51px;justify-content:flex-start;padding-left:2.6px;font-size:9px;font-weight:bold;font-size:9.4px;letter-spacing:0.1px;">Average Rating / KPI Results</div>
<div class="a" style="left:616.62px;top:603.84px;width:67.1px;height:12.51px;background:#ffccff;"></div>
<div class="cell" style="left:616.62px;top:604.84px;width:67.1px;height:12.51px;justify-content:center;font-size:9px;font-weight:bold;font-size:9.5px;letter-spacing:0.3px;">3.3</div>
<div class="a" style="left:769.33px;top:603.84px;width:50.24px;height:12.51px;background:#ffccff;"></div>
<div class="cell" style="left:769.33px;top:604.84px;width:50.24px;height:12.51px;justify-content:center;font-size:9px;font-weight:bold;font-size:9.5px;letter-spacing:0.3px;">3.3</div>
<div class="a" style="left:918.95px;top:603.84px;width:80.89px;height:12.51px;background:#ffccff;"></div>
<div class="cell" style="left:918.95px;top:604.84px;width:80.89px;height:12.51px;justify-content:center;font-size:9px;font-weight:bold;font-size:9.5px;letter-spacing:0.3px;">3.7</div>
<div class="a" style="left:1104.48px;top:603.84px;width:146.36px;height:12.51px;background:#ffccff;"></div>
<div class="cell" style="left:1104.48px;top:604.84px;width:146.36px;height:12.51px;justify-content:center;font-size:9px;font-weight:bold;font-size:9.5px;letter-spacing:0.3px;">3.8</div>
<div class="cell" style="left:61.3px;top:629.38px;width:460.47px;height:12.02px;justify-content:flex-start;padding-left:2.6px;font-size:9px;font-weight:bold;font-style:italic;color:#1c58ae;overflow:visible;font-size:9.4px;letter-spacing:0.2px;">NB: The respective average rating to be inserted into respective KPI Owner&#x27;s Performance Appraisal form</div>
<div class="a" style="left:918.45px;top:192.38px;width:332.89px;height:1.0px;background:#6a6a6a;"></div>
<div class="a" style="left:918.45px;top:205.25px;width:332.89px;height:1.0px;background:#6a6a6a;"></div>
<div class="a" style="left:60.8px;top:218.04px;width:623.43px;height:1.0px;background:#6a6a6a;"></div>
<div class="a" style="left:60.8px;top:230.74px;width:623.43px;height:1.0px;background:#6a6a6a;"></div>
<div class="a" style="left:60.8px;top:243.07px;width:623.43px;height:1.0px;background:#6a6a6a;"></div>
<div class="a" style="left:60.8px;top:267.01px;width:556.32px;height:1.0px;background:#6a6a6a;"></div>
<div class="a" style="left:60.8px;top:280.03px;width:556.32px;height:1.0px;background:#6a6a6a;"></div>
<div class="a" style="left:60.8px;top:293.05px;width:556.32px;height:1.0px;background:#6a6a6a;"></div>
<div class="a" style="left:60.8px;top:306.07px;width:556.32px;height:1.0px;background:#6a6a6a;"></div>
<div class="a" style="left:60.8px;top:319.09px;width:556.32px;height:1.0px;background:#6a6a6a;"></div>
<div class="a" style="left:60.8px;top:332.12px;width:556.32px;height:1.0px;background:#6a6a6a;"></div>
<div class="a" style="left:60.8px;top:345.14px;width:556.32px;height:1.0px;background:#6a6a6a;"></div>
<div class="a" style="left:521.27px;top:357.69px;width:730.07px;height:1.0px;background:#6a6a6a;"></div>
<div class="a" style="left:24.89px;top:370.38px;width:1226.45px;height:1.0px;background:#6a6a6a;"></div>
<div class="a" style="left:24.89px;top:382.9px;width:1226.45px;height:1.0px;background:#6a6a6a;"></div>
<div class="a" style="left:24.89px;top:395.86px;width:1226.45px;height:1.0px;background:#6a6a6a;"></div>
<div class="a" style="left:24.89px;top:408.83px;width:1226.45px;height:1.0px;background:#6a6a6a;"></div>
<div class="a" style="left:24.89px;top:421.8px;width:1226.45px;height:1.0px;background:#6a6a6a;"></div>
<div class="a" style="left:24.89px;top:434.77px;width:659.34px;height:1.0px;background:#6a6a6a;"></div>
<div class="a" style="left:819.07px;top:434.77px;width:181.27px;height:1.0px;background:#6a6a6a;"></div>
<div class="a" style="left:24.89px;top:447.73px;width:659.34px;height:1.0px;background:#6a6a6a;"></div>
<div class="a" style="left:24.89px;top:460.7px;width:795.17px;height:1.0px;background:#6a6a6a;"></div>
<div class="a" style="left:24.89px;top:473.67px;width:497.38px;height:1.0px;background:#6a6a6a;"></div>
<div class="a" style="left:683.23px;top:473.67px;width:136.84px;height:1.0px;background:#6a6a6a;"></div>
<div class="a" style="left:24.89px;top:486.63px;width:497.38px;height:1.0px;background:#6a6a6a;"></div>
<div class="a" style="left:683.23px;top:486.63px;width:568.11px;height:1.0px;background:#6a6a6a;"></div>
<div class="a" style="left:24.89px;top:499.6px;width:497.38px;height:1.0px;background:#6a6a6a;"></div>
<div class="a" style="left:819.07px;top:499.6px;width:432.27px;height:1.0px;background:#6a6a6a;"></div>
<div class="a" style="left:24.89px;top:512.57px;width:497.38px;height:1.0px;background:#6a6a6a;"></div>
<div class="a" style="left:819.07px;top:512.57px;width:432.27px;height:1.0px;background:#6a6a6a;"></div>
<div class="a" style="left:24.89px;top:525.54px;width:497.38px;height:1.0px;background:#6a6a6a;"></div>
<div class="a" style="left:999.34px;top:525.54px;width:252.0px;height:1.0px;background:#6a6a6a;"></div>
<div class="a" style="left:24.89px;top:538.5px;width:497.38px;height:1.0px;background:#6a6a6a;"></div>
<div class="a" style="left:999.34px;top:538.5px;width:252.0px;height:1.0px;background:#6a6a6a;"></div>
<div class="a" style="left:24.89px;top:551.47px;width:497.38px;height:1.0px;background:#6a6a6a;"></div>
<div class="a" style="left:999.34px;top:551.47px;width:252.0px;height:1.0px;background:#6a6a6a;"></div>
<div class="a" style="left:24.89px;top:564.44px;width:497.38px;height:1.0px;background:#6a6a6a;"></div>
<div class="a" style="left:999.34px;top:564.44px;width:252.0px;height:1.0px;background:#6a6a6a;"></div>
<div class="a" style="left:24.89px;top:577.41px;width:497.38px;height:1.0px;background:#6a6a6a;"></div>
<div class="a" style="left:999.34px;top:577.41px;width:252.0px;height:1.0px;background:#6a6a6a;"></div>
<div class="a" style="left:24.89px;top:590.37px;width:497.38px;height:1.0px;background:#6a6a6a;"></div>
<div class="a" style="left:999.34px;top:590.37px;width:252.0px;height:1.0px;background:#6a6a6a;"></div>
<div class="a" style="left:24.89px;top:603.34px;width:497.38px;height:1.0px;background:#6a6a6a;"></div>
<div class="a" style="left:616.13px;top:603.34px;width:68.1px;height:1.0px;background:#6a6a6a;"></div>
<div class="a" style="left:768.83px;top:603.34px;width:51.23px;height:1.0px;background:#6a6a6a;"></div>
<div class="a" style="left:918.45px;top:603.34px;width:332.89px;height:1.0px;background:#6a6a6a;"></div>
<div class="a" style="left:60.8px;top:615.85px;width:461.47px;height:1.0px;background:#6a6a6a;"></div>
<div class="a" style="left:616.13px;top:615.85px;width:68.1px;height:1.0px;background:#6a6a6a;"></div>
<div class="a" style="left:768.83px;top:615.85px;width:51.23px;height:1.0px;background:#6a6a6a;"></div>
<div class="a" style="left:918.45px;top:615.85px;width:81.88px;height:1.0px;background:#6a6a6a;"></div>
<div class="a" style="left:1103.98px;top:615.85px;width:147.36px;height:1.0px;background:#6a6a6a;"></div>
<div class="a" style="left:24.89px;top:370.38px;width:1.0px;height:233.95px;background:#6a6a6a;"></div>
<div class="a" style="left:60.8px;top:218.04px;width:1.0px;height:26.03px;background:#6a6a6a;"></div>
<div class="a" style="left:60.8px;top:267.01px;width:1.0px;height:79.13px;background:#6a6a6a;"></div>
<div class="a" style="left:60.8px;top:370.38px;width:1.0px;height:246.47px;background:#6a6a6a;"></div>
<div class="a" style="left:521.27px;top:218.04px;width:1.0px;height:26.03px;background:#6a6a6a;"></div>
<div class="a" style="left:521.27px;top:267.01px;width:1.0px;height:79.13px;background:#6a6a6a;"></div>
<div class="a" style="left:521.27px;top:357.69px;width:1.0px;height:259.16px;background:#6a6a6a;"></div>
<div class="a" style="left:616.13px;top:218.04px;width:1.0px;height:26.03px;background:#6a6a6a;"></div>
<div class="a" style="left:616.13px;top:267.01px;width:1.0px;height:79.13px;background:#6a6a6a;"></div>
<div class="a" style="left:616.13px;top:370.38px;width:1.0px;height:91.31px;background:#6a6a6a;"></div>
<div class="a" style="left:616.13px;top:603.34px;width:1.0px;height:13.51px;background:#6a6a6a;"></div>
<div class="a" style="left:683.23px;top:218.04px;width:1.0px;height:26.03px;background:#6a6a6a;"></div>
<div class="a" style="left:683.23px;top:357.69px;width:1.0px;height:129.94px;background:#6a6a6a;"></div>
<div class="a" style="left:683.23px;top:603.34px;width:1.0px;height:13.51px;background:#6a6a6a;"></div>
<div class="a" style="left:768.83px;top:370.38px;width:1.0px;height:26.48px;background:#6a6a6a;"></div>
<div class="a" style="left:768.83px;top:408.83px;width:1.0px;height:13.96px;background:#6a6a6a;"></div>
<div class="a" style="left:768.83px;top:460.7px;width:1.0px;height:26.93px;background:#6a6a6a;"></div>
<div class="a" style="left:768.83px;top:603.34px;width:1.0px;height:13.51px;background:#6a6a6a;"></div>
<div class="a" style="left:819.07px;top:357.69px;width:1.0px;height:78.08px;background:#6a6a6a;"></div>
<div class="a" style="left:819.07px;top:460.7px;width:1.0px;height:52.87px;background:#6a6a6a;"></div>
<div class="a" style="left:819.07px;top:603.34px;width:1.0px;height:13.51px;background:#6a6a6a;"></div>
<div class="a" style="left:918.45px;top:192.38px;width:1.0px;height:13.87px;background:#6a6a6a;"></div>
<div class="a" style="left:918.45px;top:370.38px;width:1.0px;height:65.38px;background:#6a6a6a;"></div>
<div class="a" style="left:918.45px;top:486.63px;width:1.0px;height:26.93px;background:#6a6a6a;"></div>
<div class="a" style="left:918.45px;top:603.34px;width:1.0px;height:13.51px;background:#6a6a6a;"></div>
<div class="a" style="left:999.34px;top:192.38px;width:1.0px;height:13.87px;background:#6a6a6a;"></div>
<div class="a" style="left:999.34px;top:357.69px;width:1.0px;height:78.08px;background:#6a6a6a;"></div>
<div class="a" style="left:999.34px;top:486.63px;width:1.0px;height:130.22px;background:#6a6a6a;"></div>
<div class="a" style="left:1103.98px;top:192.38px;width:1.0px;height:13.87px;background:#6a6a6a;"></div>
<div class="a" style="left:1103.98px;top:370.38px;width:1.0px;height:52.41px;background:#6a6a6a;"></div>
<div class="a" style="left:1103.98px;top:486.63px;width:1.0px;height:130.22px;background:#6a6a6a;"></div>
<div class="a" style="left:1250.34px;top:192.38px;width:1.0px;height:13.87px;background:#6a6a6a;"></div>
<div class="a" style="left:1250.34px;top:357.69px;width:1.0px;height:65.11px;background:#6a6a6a;"></div>
<div class="a" style="left:1250.34px;top:486.63px;width:1.0px;height:130.22px;background:#6a6a6a;"></div>
<svg class="a" style="left:617.17px;top:383.94px;width:5.26px;height:5.26px;overflow:visible;" viewBox="0 0 5 5"><path d="M0 0 H5 L0 5 Z" fill="#1f5c33"/></svg>
<svg class="a" style="left:617.17px;top:396.91px;width:5.26px;height:5.26px;overflow:visible;" viewBox="0 0 5 5"><path d="M0 0 H5 L0 5 Z" fill="#1f5c33"/></svg>
<svg class="a" style="left:617.17px;top:409.87px;width:5.26px;height:5.26px;overflow:visible;" viewBox="0 0 5 5"><path d="M0 0 H5 L0 5 Z" fill="#1f5c33"/></svg>
<svg class="a" style="left:617.17px;top:422.84px;width:5.26px;height:5.26px;overflow:visible;" viewBox="0 0 5 5"><path d="M0 0 H5 L0 5 Z" fill="#1f5c33"/></svg>
<svg class="a" style="left:617.17px;top:435.81px;width:5.26px;height:5.26px;overflow:visible;" viewBox="0 0 5 5"><path d="M0 0 H5 L0 5 Z" fill="#1f5c33"/></svg>
<svg class="a" style="left:617.17px;top:448.78px;width:5.26px;height:5.26px;overflow:visible;" viewBox="0 0 5 5"><path d="M0 0 H5 L0 5 Z" fill="#1f5c33"/></svg>
<svg class="a" style="left:769.87px;top:383.94px;width:5.26px;height:5.26px;overflow:visible;" viewBox="0 0 5 5"><path d="M0 0 H5 L0 5 Z" fill="#1f5c33"/></svg>
<svg class="a" style="left:769.87px;top:409.87px;width:5.26px;height:5.26px;overflow:visible;" viewBox="0 0 5 5"><path d="M0 0 H5 L0 5 Z" fill="#1f5c33"/></svg>
<svg class="a" style="left:769.87px;top:461.74px;width:5.26px;height:5.26px;overflow:visible;" viewBox="0 0 5 5"><path d="M0 0 H5 L0 5 Z" fill="#1f5c33"/></svg>
<svg class="a" style="left:769.87px;top:474.71px;width:5.26px;height:5.26px;overflow:visible;" viewBox="0 0 5 5"><path d="M0 0 H5 L0 5 Z" fill="#1f5c33"/></svg>
<svg class="a" style="left:919.5px;top:383.94px;width:5.26px;height:5.26px;overflow:visible;" viewBox="0 0 5 5"><path d="M0 0 H5 L0 5 Z" fill="#1f5c33"/></svg>
<svg class="a" style="left:919.5px;top:396.91px;width:5.26px;height:5.26px;overflow:visible;" viewBox="0 0 5 5"><path d="M0 0 H5 L0 5 Z" fill="#1f5c33"/></svg>
<svg class="a" style="left:919.5px;top:409.87px;width:5.26px;height:5.26px;overflow:visible;" viewBox="0 0 5 5"><path d="M0 0 H5 L0 5 Z" fill="#1f5c33"/></svg>
<svg class="a" style="left:919.5px;top:422.84px;width:5.26px;height:5.26px;overflow:visible;" viewBox="0 0 5 5"><path d="M0 0 H5 L0 5 Z" fill="#1f5c33"/></svg>
<svg class="a" style="left:919.5px;top:487.68px;width:5.26px;height:5.26px;overflow:visible;" viewBox="0 0 5 5"><path d="M0 0 H5 L0 5 Z" fill="#1f5c33"/></svg>
<svg class="a" style="left:919.5px;top:500.64px;width:5.26px;height:5.26px;overflow:visible;" viewBox="0 0 5 5"><path d="M0 0 H5 L0 5 Z" fill="#1f5c33"/></svg>
<svg class="a" style="left:1105.03px;top:383.94px;width:5.26px;height:5.26px;overflow:visible;" viewBox="0 0 5 5"><path d="M0 0 H5 L0 5 Z" fill="#1f5c33"/></svg>
<svg class="a" style="left:1105.03px;top:396.91px;width:5.26px;height:5.26px;overflow:visible;" viewBox="0 0 5 5"><path d="M0 0 H5 L0 5 Z" fill="#1f5c33"/></svg>
<svg class="a" style="left:1105.03px;top:409.87px;width:5.26px;height:5.26px;overflow:visible;" viewBox="0 0 5 5"><path d="M0 0 H5 L0 5 Z" fill="#1f5c33"/></svg>
<svg class="a" style="left:1105.03px;top:487.68px;width:5.26px;height:5.26px;overflow:visible;" viewBox="0 0 5 5"><path d="M0 0 H5 L0 5 Z" fill="#1f5c33"/></svg>
<svg class="a" style="left:1105.03px;top:500.64px;width:5.26px;height:5.26px;overflow:visible;" viewBox="0 0 5 5"><path d="M0 0 H5 L0 5 Z" fill="#1f5c33"/></svg>
<svg class="a" style="left:1105.03px;top:513.61px;width:5.26px;height:5.26px;overflow:visible;" viewBox="0 0 5 5"><path d="M0 0 H5 L0 5 Z" fill="#1f5c33"/></svg>
<svg class="a" style="left:1105.03px;top:526.58px;width:5.26px;height:5.26px;overflow:visible;" viewBox="0 0 5 5"><path d="M0 0 H5 L0 5 Z" fill="#1f5c33"/></svg>
<svg class="a" style="left:1105.03px;top:539.55px;width:5.26px;height:5.26px;overflow:visible;" viewBox="0 0 5 5"><path d="M0 0 H5 L0 5 Z" fill="#1f5c33"/></svg>
<svg class="a" style="left:1105.03px;top:552.51px;width:5.26px;height:5.26px;overflow:visible;" viewBox="0 0 5 5"><path d="M0 0 H5 L0 5 Z" fill="#1f5c33"/></svg>
<svg class="a" style="left:1105.03px;top:565.48px;width:5.26px;height:5.26px;overflow:visible;" viewBox="0 0 5 5"><path d="M0 0 H5 L0 5 Z" fill="#1f5c33"/></svg>
<svg class="a" style="left:1105.03px;top:578.45px;width:5.26px;height:5.26px;overflow:visible;" viewBox="0 0 5 5"><path d="M0 0 H5 L0 5 Z" fill="#1f5c33"/></svg>
<svg class="a" style="left:1105.03px;top:591.42px;width:5.26px;height:5.26px;overflow:visible;" viewBox="0 0 5 5"><path d="M0 0 H5 L0 5 Z" fill="#1f5c33"/></svg>
<div class="a" style="left:60.03px;top:687.23px;width:462.83px;height:14.38px;border:2.3px solid #2a6e49;"></div>
<div class="a" style="left:519.96px;top:698.71px;width:4.35px;height:4.35px;background:#2a6e49;border:0.8px solid #fff;"></div>
<div class="a" style="left:0.0px;top:850.4px;width:1440.0px;height:24.66px;background:#f1f1f1;"></div>
<div class="a" style="left:0.0px;top:850.04px;width:1440.0px;height:0.73px;background:#d2d2d2;"></div>
<div class="a" style="left:0.0px;top:875.06px;width:1440.0px;height:24.48px;background:#e6e6e6;"></div>
<div class="a" style="left:0.0px;top:874.7px;width:1440.0px;height:0.73px;background:#cfcfcf;"></div>
<svg class="a" style="left:15.23px;top:858.2px;width:7.07px;height:11.61px;overflow:visible;" viewBox="0 0 7 10"><path d="M6.4 0.8 V9.2 L0.8 5 Z" fill="#b2b2b2"/></svg>
<svg class="a" style="left:37.54px;top:858.2px;width:7.07px;height:11.61px;overflow:visible;" viewBox="0 0 7 10"><path d="M0.6 0.8 V9.2 L6.2 5 Z" fill="#b2b2b2"/></svg>
<div class="a" style="left:59.85px;top:850.4px;width:79.8px;height:22.67px;background:#fff;border-radius:0 0 3px 3px;box-shadow:0 0 1.5px rgba(0,0,0,.2);"></div>
<div class="a" style="left:63.11px;top:852.94px;width:73.09px;height:17.59px;background:linear-gradient(#cdeacd,#84cb8c);border-radius:1.5px;"></div>
<span class="c" style="left:99.75px;top:863.09px;font-size:11.8px;color:#1e6b3a;font-weight:bold;">ABC#15</span>
<span class="c" style="left:159.05px;top:862.01px;font-size:17px;color:#222;">+</span>
<div class="a" style="left:176.46px;top:851.49px;width:0.73px;height:22.67px;background:#d4d4d4;"></div>
<span class="t" id="t32" style="left:25.21px;top:888.66px;font-size:11.5px;letter-spacing:-0.105px;color:#5a5a5a;">Ready</span>
<svg class="a" style="left:79.44px;top:879.96px;width:13.78px;height:15.96px;overflow:visible;" viewBox="0 0 14 16"><circle cx="6" cy="2.2" r="1.6" fill="none" stroke="#666" stroke-width="1"/><path d="M1 5 H11 M6 5 V10 M6 10 L3 15 M6 10 L8 13" fill="none" stroke="#666" stroke-width="1.1" stroke-linecap="round"/><path d="M8.6 11.4 L10.6 13.8 L13.6 9.4" fill="none" stroke="#666" stroke-width="1.1"/></svg>
<span class="t" id="t33" style="left:98.12px;top:888.66px;font-size:11.5px;letter-spacing:0.512px;color:#5a5a5a;">Accessibility: Good to go</span>
<div class="a" style="left:1122.08px;top:876.7px;width:34.28px;height:22.85px;background:#bebebe;"></div>
<svg class="a" style="left:1132.41px;top:881.77px;width:13.78px;height:12.33px;overflow:visible;" viewBox="0 0 14 12"><rect x="0.6" y="0.6" width="12.8" height="10.8" fill="#fff" stroke="#fff" stroke-width="0.6"/><path d="M0.6 4.2 H13.4 M0.6 7.8 H13.4 M4.9 0.6 V11.4 M9.1 0.6 V11.4" stroke="#b0b0b0" stroke-width="0.9"/></svg>
<svg class="a" style="left:1167.96px;top:881.77px;width:14.51px;height:12.33px;overflow:visible;" viewBox="0 0 14 12"><rect x="0.6" y="0.6" width="12.8" height="10.8" fill="none" stroke="#666" stroke-width="1"/><path d="M4 0.6 V11.4 M10 0.6 V11.4 M5.6 3 H8.4 M5.6 5 H8.4 M5.6 7 H8.4 M5.6 9 H8.4" stroke="#666" stroke-width="0.8"/></svg>
<svg class="a" style="left:1202.78px;top:881.77px;width:15.23px;height:12.33px;overflow:visible;" viewBox="0 0 14 12"><rect x="0.6" y="0.6" width="12.8" height="10.8" fill="none" stroke="#666" stroke-width="1"/><path d="M4.6 0.6 V6.4 H9.4 V0.6" fill="none" stroke="#666" stroke-width="0.9"/></svg>
<span class="c" style="left:1240.87px;top:887.58px;font-size:12px;color:#444;font-weight:bold;">−</span>
<div class="a" style="left:1252.11px;top:886.67px;width:99.39px;height:2.54px;background:#9c9c9c;border-radius:1px;"></div>
<div class="a" style="left:1293.46px;top:879.78px;width:15.96px;height:15.96px;background:#fff;border-radius:50%;box-shadow:0 0.3px 1.4px rgba(0,0,0,.45);"></div>
<span class="c" style="left:1362.56px;top:887.58px;font-size:12px;color:#444;font-weight:bold;">+</span>
<span class="t" id="t34" style="left:1383.78px;top:888.12px;font-size:11.5px;letter-spacing:0.469px;color:#5a5a5a;">100%</span>
</div></div></body></html>
